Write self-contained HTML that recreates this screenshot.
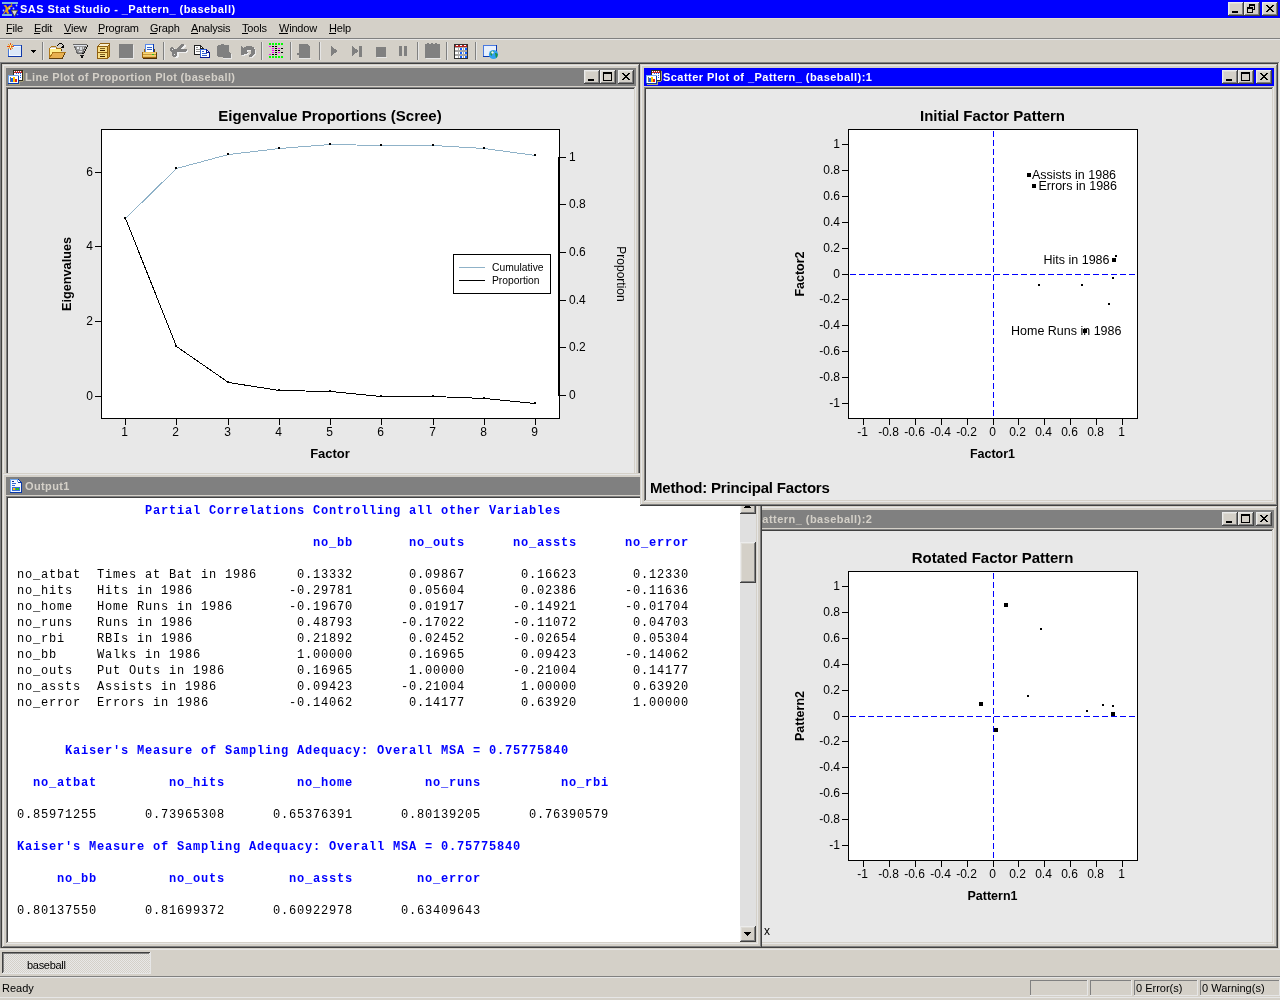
<!DOCTYPE html><html><head><meta charset="utf-8"><style>html,body{margin:0;padding:0;}body{width:1280px;height:1000px;position:relative;overflow:hidden;background:#D4D0C8;font-family:"Liberation Sans",sans-serif;}</style></head><body><div style="position:absolute;left:0;top:0;width:1280px;height:1000px;overflow:hidden;will-change:transform"><div style="position:absolute;left:0px;top:0px;width:1280px;height:18px;background:#0000FF;"></div>
<svg style="position:absolute;left:0px;top:0px" width="20" height="18">
<rect x="2" y="2" width="16" height="2" fill="#78B8E0"/><rect x="2" y="14" width="10" height="2" fill="#78B8E0"/>
<path d="M3.5 5.5 L6 5 L7.5 7.5 L9.5 5.5 L12.5 5.8 L9 8.5 L8 11 L9.5 13.5 L7 13.8 L6 11.5 L4 14 L3 13.8 L5.5 10 L5.5 7.5 Z" fill="#E8A810"/>
<path d="M10.3 3.5 L12 3.2 L12.2 5 L11 5.8 L12.8 6 L12.5 6.5 L10 6.5 L11.5 4.5 Z" fill="#E8A810"/>
<path d="M11.3 10.3 L17.7 10.3 L14.5 16.5 Z" fill="#D8D8D0" stroke="#505020" stroke-width="0.8"/>
<circle cx="16.5" cy="5.5" r="0.9" fill="#B0E0F0"/><circle cx="9.5" cy="8.5" r="0.9" fill="#B0E0F0"/><circle cx="13.5" cy="8.5" r="0.9" fill="#B0E0F0"/><circle cx="3.5" cy="10.5" r="0.9" fill="#B0E0F0"/><circle cx="17.5" cy="14.5" r="0.8" fill="#60B0E0"/>
</svg>
<svg style="position:absolute;left:0;top:0;overflow:visible" width="1" height="1"><text x="20" y="13" font-family="'Liberation Sans', sans-serif" font-size="11" font-weight="bold" fill="#FFFFFF" text-anchor="start" style="white-space:pre;letter-spacing:0.46px">SAS Stat Studio - _Pattern_ (baseball)</text></svg>
<div style="position:absolute;left:1228px;top:2px;width:16px;height:14px;background:#404040;"></div>
<div style="position:absolute;left:1228px;top:2px;width:15px;height:13px;background:#ECECEC;"></div>
<div style="position:absolute;left:1229px;top:3px;width:14px;height:12px;background:#808080;"></div>
<div style="position:absolute;left:1229px;top:3px;width:13px;height:11px;background:#DEDCD6;"></div>
<div style="position:absolute;left:1230px;top:4px;width:12px;height:10px;background:#D4D0C8;"></div>
<div style="position:absolute;left:1232px;top:11px;width:6px;height:1px;background:#000"></div><div style="position:absolute;left:1232px;top:12px;width:6px;height:1px;background:#000"></div>
<div style="position:absolute;left:1244px;top:2px;width:16px;height:14px;background:#404040;"></div>
<div style="position:absolute;left:1244px;top:2px;width:15px;height:13px;background:#ECECEC;"></div>
<div style="position:absolute;left:1245px;top:3px;width:14px;height:12px;background:#808080;"></div>
<div style="position:absolute;left:1245px;top:3px;width:13px;height:11px;background:#DEDCD6;"></div>
<div style="position:absolute;left:1246px;top:4px;width:12px;height:10px;background:#D4D0C8;"></div>
<div style="position:absolute;left:1249px;top:4px;width:6px;height:1px;background:#000"></div><div style="position:absolute;left:1249px;top:5px;width:6px;height:1px;background:#000"></div><div style="position:absolute;left:1249px;top:6px;width:1px;height:1px;background:#000"></div><div style="position:absolute;left:1254px;top:6px;width:1px;height:1px;background:#000"></div><div style="position:absolute;left:1247px;top:7px;width:6px;height:1px;background:#000"></div><div style="position:absolute;left:1254px;top:7px;width:1px;height:1px;background:#000"></div><div style="position:absolute;left:1247px;top:8px;width:6px;height:1px;background:#000"></div><div style="position:absolute;left:1254px;top:8px;width:1px;height:1px;background:#000"></div><div style="position:absolute;left:1247px;top:9px;width:1px;height:1px;background:#000"></div><div style="position:absolute;left:1252px;top:9px;width:3px;height:1px;background:#000"></div><div style="position:absolute;left:1247px;top:10px;width:1px;height:1px;background:#000"></div><div style="position:absolute;left:1252px;top:10px;width:1px;height:1px;background:#000"></div><div style="position:absolute;left:1247px;top:11px;width:1px;height:1px;background:#000"></div><div style="position:absolute;left:1252px;top:11px;width:1px;height:1px;background:#000"></div><div style="position:absolute;left:1247px;top:12px;width:6px;height:1px;background:#000"></div>
<div style="position:absolute;left:1262px;top:2px;width:16px;height:14px;background:#404040;"></div>
<div style="position:absolute;left:1262px;top:2px;width:15px;height:13px;background:#ECECEC;"></div>
<div style="position:absolute;left:1263px;top:3px;width:14px;height:12px;background:#808080;"></div>
<div style="position:absolute;left:1263px;top:3px;width:13px;height:11px;background:#DEDCD6;"></div>
<div style="position:absolute;left:1264px;top:4px;width:12px;height:10px;background:#D4D0C8;"></div>
<div style="position:absolute;left:1266px;top:5px;width:2px;height:1px;background:#000"></div><div style="position:absolute;left:1272px;top:5px;width:2px;height:1px;background:#000"></div><div style="position:absolute;left:1267px;top:6px;width:2px;height:1px;background:#000"></div><div style="position:absolute;left:1271px;top:6px;width:2px;height:1px;background:#000"></div><div style="position:absolute;left:1268px;top:7px;width:4px;height:1px;background:#000"></div><div style="position:absolute;left:1269px;top:8px;width:2px;height:1px;background:#000"></div><div style="position:absolute;left:1268px;top:9px;width:4px;height:1px;background:#000"></div><div style="position:absolute;left:1267px;top:10px;width:2px;height:1px;background:#000"></div><div style="position:absolute;left:1271px;top:10px;width:2px;height:1px;background:#000"></div><div style="position:absolute;left:1266px;top:11px;width:2px;height:1px;background:#000"></div><div style="position:absolute;left:1272px;top:11px;width:2px;height:1px;background:#000"></div>
<div style="position:absolute;left:0px;top:18px;width:1280px;height:20px;background:#D4D0C8;"></div>
<div style="position:absolute;left:0px;top:18px;width:1280px;height:1px;background:#E4E0CC;"></div>
<div style="position:absolute;left:0px;top:38px;width:1280px;height:1px;background:#808080;"></div>
<div style="position:absolute;left:0px;top:39px;width:1280px;height:1px;background:#E6E6E6;"></div>
<svg style="position:absolute;left:0;top:0;overflow:visible" width="1" height="1"><text x="6" y="32" font-family="'Liberation Sans', sans-serif" font-size="11" font-weight="normal" fill="#000" text-anchor="start" style="white-space:pre;letter-spacing:-0.2px">File</text></svg>
<div style="position:absolute;left:6px;top:33px;width:6px;height:1px;background:#000;"></div>
<svg style="position:absolute;left:0;top:0;overflow:visible" width="1" height="1"><text x="34" y="32" font-family="'Liberation Sans', sans-serif" font-size="11" font-weight="normal" fill="#000" text-anchor="start" style="white-space:pre;letter-spacing:-0.2px">Edit</text></svg>
<div style="position:absolute;left:34px;top:33px;width:6px;height:1px;background:#000;"></div>
<svg style="position:absolute;left:0;top:0;overflow:visible" width="1" height="1"><text x="64" y="32" font-family="'Liberation Sans', sans-serif" font-size="11" font-weight="normal" fill="#000" text-anchor="start" style="white-space:pre;letter-spacing:-0.2px">View</text></svg>
<div style="position:absolute;left:64px;top:33px;width:7px;height:1px;background:#000;"></div>
<svg style="position:absolute;left:0;top:0;overflow:visible" width="1" height="1"><text x="98" y="32" font-family="'Liberation Sans', sans-serif" font-size="11" font-weight="normal" fill="#000" text-anchor="start" style="white-space:pre;letter-spacing:-0.2px">Program</text></svg>
<div style="position:absolute;left:98px;top:33px;width:6px;height:1px;background:#000;"></div>
<svg style="position:absolute;left:0;top:0;overflow:visible" width="1" height="1"><text x="150" y="32" font-family="'Liberation Sans', sans-serif" font-size="11" font-weight="normal" fill="#000" text-anchor="start" style="white-space:pre;letter-spacing:-0.2px">Graph</text></svg>
<div style="position:absolute;left:150px;top:33px;width:7px;height:1px;background:#000;"></div>
<svg style="position:absolute;left:0;top:0;overflow:visible" width="1" height="1"><text x="191" y="32" font-family="'Liberation Sans', sans-serif" font-size="11" font-weight="normal" fill="#000" text-anchor="start" style="white-space:pre;letter-spacing:-0.2px">Analysis</text></svg>
<div style="position:absolute;left:191px;top:33px;width:7px;height:1px;background:#000;"></div>
<svg style="position:absolute;left:0;top:0;overflow:visible" width="1" height="1"><text x="242" y="32" font-family="'Liberation Sans', sans-serif" font-size="11" font-weight="normal" fill="#000" text-anchor="start" style="white-space:pre;letter-spacing:-0.2px">Tools</text></svg>
<div style="position:absolute;left:242px;top:33px;width:6px;height:1px;background:#000;"></div>
<svg style="position:absolute;left:0;top:0;overflow:visible" width="1" height="1"><text x="279" y="32" font-family="'Liberation Sans', sans-serif" font-size="11" font-weight="normal" fill="#000" text-anchor="start" style="white-space:pre;letter-spacing:-0.2px">Window</text></svg>
<div style="position:absolute;left:279px;top:33px;width:9px;height:1px;background:#000;"></div>
<svg style="position:absolute;left:0;top:0;overflow:visible" width="1" height="1"><text x="329" y="32" font-family="'Liberation Sans', sans-serif" font-size="11" font-weight="normal" fill="#000" text-anchor="start" style="white-space:pre;letter-spacing:-0.2px">Help</text></svg>
<div style="position:absolute;left:329px;top:33px;width:7px;height:1px;background:#000;"></div>
<div style="position:absolute;left:0px;top:40px;width:1280px;height:22px;background:#D4D0C8;"></div>
<div style="position:absolute;left:10px;top:43px;width:1px;height:1px;background:#E85010"></div><div style="position:absolute;left:8px;top:44px;width:1px;height:1px;background:#F0A020"></div><div style="position:absolute;left:10px;top:44px;width:1px;height:1px;background:#E85010"></div><div style="position:absolute;left:12px;top:44px;width:1px;height:1px;background:#F0A020"></div><div style="position:absolute;left:9px;top:45px;width:1px;height:1px;background:#F0A020"></div><div style="position:absolute;left:10px;top:45px;width:1px;height:1px;background:#FFF0A0"></div><div style="position:absolute;left:11px;top:45px;width:1px;height:1px;background:#F0A020"></div><div style="position:absolute;left:13px;top:45px;width:8px;height:1px;background:#4878D8"></div><div style="position:absolute;left:21px;top:45px;width:1px;height:1px;background:#1038A8"></div><div style="position:absolute;left:7px;top:46px;width:3px;height:1px;background:#E85010"></div><div style="position:absolute;left:10px;top:46px;width:1px;height:1px;background:#FFF0A0"></div><div style="position:absolute;left:11px;top:46px;width:3px;height:1px;background:#E85010"></div><div style="position:absolute;left:14px;top:46px;width:7px;height:1px;background:#F4F8FF"></div><div style="position:absolute;left:21px;top:46px;width:1px;height:1px;background:#1038A8"></div><div style="position:absolute;left:9px;top:47px;width:1px;height:1px;background:#F0A020"></div><div style="position:absolute;left:10px;top:47px;width:1px;height:1px;background:#FFF0A0"></div><div style="position:absolute;left:11px;top:47px;width:1px;height:1px;background:#F0A020"></div><div style="position:absolute;left:13px;top:47px;width:1px;height:1px;background:#F4F8FF"></div><div style="position:absolute;left:14px;top:47px;width:7px;height:1px;background:#DCE8F8"></div><div style="position:absolute;left:21px;top:47px;width:1px;height:1px;background:#1038A8"></div><div style="position:absolute;left:8px;top:48px;width:1px;height:1px;background:#F0A020"></div><div style="position:absolute;left:10px;top:48px;width:1px;height:1px;background:#E85010"></div><div style="position:absolute;left:12px;top:48px;width:1px;height:1px;background:#F0A020"></div><div style="position:absolute;left:13px;top:48px;width:8px;height:1px;background:#DCE8F8"></div><div style="position:absolute;left:21px;top:48px;width:1px;height:1px;background:#1038A8"></div><div style="position:absolute;left:8px;top:49px;width:1px;height:1px;background:#4878D8"></div><div style="position:absolute;left:9px;top:49px;width:1px;height:1px;background:#F4F8FF"></div><div style="position:absolute;left:10px;top:49px;width:1px;height:1px;background:#E85010"></div><div style="position:absolute;left:12px;top:49px;width:9px;height:1px;background:#DCE8F8"></div><div style="position:absolute;left:21px;top:49px;width:1px;height:1px;background:#1038A8"></div><div style="position:absolute;left:8px;top:50px;width:1px;height:1px;background:#4878D8"></div><div style="position:absolute;left:9px;top:50px;width:1px;height:1px;background:#F4F8FF"></div><div style="position:absolute;left:10px;top:50px;width:11px;height:1px;background:#DCE8F8"></div><div style="position:absolute;left:21px;top:50px;width:1px;height:1px;background:#1038A8"></div><div style="position:absolute;left:8px;top:51px;width:1px;height:1px;background:#4878D8"></div><div style="position:absolute;left:9px;top:51px;width:1px;height:1px;background:#F4F8FF"></div><div style="position:absolute;left:10px;top:51px;width:11px;height:1px;background:#DCE8F8"></div><div style="position:absolute;left:21px;top:51px;width:1px;height:1px;background:#1038A8"></div><div style="position:absolute;left:8px;top:52px;width:1px;height:1px;background:#4878D8"></div><div style="position:absolute;left:9px;top:52px;width:1px;height:1px;background:#F4F8FF"></div><div style="position:absolute;left:10px;top:52px;width:11px;height:1px;background:#DCE8F8"></div><div style="position:absolute;left:21px;top:52px;width:1px;height:1px;background:#1038A8"></div><div style="position:absolute;left:8px;top:53px;width:1px;height:1px;background:#4878D8"></div><div style="position:absolute;left:9px;top:53px;width:1px;height:1px;background:#F4F8FF"></div><div style="position:absolute;left:10px;top:53px;width:11px;height:1px;background:#DCE8F8"></div><div style="position:absolute;left:21px;top:53px;width:1px;height:1px;background:#1038A8"></div><div style="position:absolute;left:8px;top:54px;width:1px;height:1px;background:#4878D8"></div><div style="position:absolute;left:9px;top:54px;width:1px;height:1px;background:#F4F8FF"></div><div style="position:absolute;left:10px;top:54px;width:11px;height:1px;background:#DCE8F8"></div><div style="position:absolute;left:21px;top:54px;width:1px;height:1px;background:#1038A8"></div><div style="position:absolute;left:8px;top:55px;width:1px;height:1px;background:#4878D8"></div><div style="position:absolute;left:9px;top:55px;width:12px;height:1px;background:#F4F8FF"></div><div style="position:absolute;left:21px;top:55px;width:1px;height:1px;background:#1038A8"></div><div style="position:absolute;left:8px;top:56px;width:14px;height:1px;background:#1038A8"></div>
<svg style="position:absolute;left:31px;top:50px" width="5" height="3" shape-rendering="crispEdges"><rect x="0" y="0" width="5" height="1" fill="#000"/><rect x="1" y="1" width="3" height="1" fill="#000"/><rect x="2" y="2" width="1" height="1" fill="#000"/></svg>
<div style="position:absolute;left:42px;top:42px;width:1px;height:18px;background:#808080;"></div>
<div style="position:absolute;left:43px;top:42px;width:1px;height:18px;background:#E6E6E6;"></div>
<svg style="position:absolute;left:48px;top:43px" width="18" height="17" shape-rendering="crispEdges"><rect x="9" y="2" width="1" height="1" fill="#000"/><rect x="10" y="1" width="1" height="1" fill="#000"/><rect x="11" y="0" width="3" height="1" fill="#000"/><rect x="14" y="1" width="1" height="1" fill="#000"/><rect x="15" y="2" width="1" height="3" fill="#000"/><rect x="13" y="4" width="3" height="1" fill="#000"/><rect x="14" y="3" width="1" height="1" fill="#000"/><rect x="3" y="3" width="5" height="1" fill="#B07818"/><rect x="2" y="4" width="1" height="1" fill="#B07818"/><rect x="8" y="4" width="1" height="2" fill="#B07818"/><rect x="9" y="5" width="4" height="1" fill="#B07818"/><rect x="1" y="5" width="1" height="11" fill="#B07818"/><rect x="2" y="5" width="6" height="1" fill="#FFFFFF"/><rect x="2" y="6" width="11" height="9" fill="#FFF090"/><rect x="13" y="6" width="1" height="2" fill="#604010"/><path d="M5 9 L18 9 L14 16 L1 16 Z" fill="#E8B050"/><rect x="5" y="9" width="13" height="1" fill="#B07818"/><path d="M5 9 L1 16" stroke="#B07818" stroke-width="1"/><rect x="1" y="15" width="14" height="1" fill="#604010"/><rect x="16" y="10" width="1" height="2" fill="#604010"/><rect x="15" y="12" width="1" height="2" fill="#604010"/><rect x="14" y="14" width="1" height="1" fill="#604010"/></svg>
<svg style="position:absolute;left:73px;top:44px" width="16" height="15" shape-rendering="crispEdges"><path d="M0 0 L14 0 L10 10 L4 10 Z" fill="#686868"/><rect x="1" y="1" width="12" height="1" fill="#E0E4EC"/><path d="M2 2 L12 2 L9 9 L5 9 Z" fill="#989898"/><rect x="4" y="3" width="2" height="2" fill="#E8ECF0"/><rect x="7" y="3" width="2" height="3" fill="#D8DCE0"/><rect x="10" y="3" width="1" height="2" fill="#D0D0D0"/><rect x="6" y="7" width="3" height="1" fill="#E0E0E0"/><rect x="14" y="1" width="1" height="2" fill="#101010"/><rect x="13" y="3" width="1" height="2" fill="#101010"/><rect x="12" y="5" width="1" height="2" fill="#101010"/><rect x="11" y="7" width="1" height="2" fill="#101010"/><rect x="9" y="9" width="2" height="1" fill="#101010"/><rect x="7" y="11" width="4" height="1" fill="#202020"/><rect x="8" y="12" width="2" height="2" fill="#101010"/></svg>
<svg style="position:absolute;left:96px;top:43px" width="15" height="17" shape-rendering="crispEdges"><path d="M1 3 L4 0 L14 0 L14 13 L11 16 L1 16 Z" fill="#906010"/><rect x="2" y="4" width="9" height="5" fill="#f8e088"/><rect x="2" y="10" width="9" height="5" fill="#f8e088"/><path d="M2 3 L4 1 L13 1 L11 3 Z" fill="#f8f0d0"/><path d="M12 3 L13 2 L13 13 L12 14 Z" fill="#d0a040"/><rect x="4" y="5" width="5" height="1" fill="#806020"/><rect x="4" y="7" width="5" height="1" fill="#402000"/><rect x="4" y="11" width="5" height="1" fill="#806020"/><rect x="4" y="13" width="5" height="1" fill="#402000"/></svg>
<svg style="position:absolute;left:119px;top:44px" width="15" height="15" shape-rendering="crispEdges"><rect x="1" y="1" width="14" height="14" fill="#E6E6E6"/><rect x="0" y="0" width="14" height="14" fill="#808080"/></svg>
<svg style="position:absolute;left:141px;top:43px" width="17" height="17" shape-rendering="crispEdges"><rect x="3" y="6" width="2" height="4" fill="#A06810"/><rect x="12" y="6" width="2" height="4" fill="#604008"/><rect x="4" y="1" width="9" height="9" fill="#0838B0"/><rect x="4" y="1" width="8" height="9" fill="#5888E8"/><rect x="5" y="2" width="7" height="8" fill="#F8FCFF"/><rect x="6" y="4" width="5" height="1" fill="#3060C8"/><rect x="6" y="6" width="5" height="1" fill="#3060C8"/><rect x="1" y="9" width="15" height="6" fill="#A06810"/><rect x="2" y="9" width="13" height="5" fill="#E8C060"/><rect x="2" y="10" width="13" height="1" fill="#F8D878"/><rect x="2" y="12" width="13" height="1" fill="#F8D070"/><rect x="2" y="11" width="13" height="1" fill="#C89838"/><rect x="2" y="15" width="14" height="1" fill="#503008"/><rect x="15" y="10" width="1" height="5" fill="#604008"/><rect x="11" y="11" width="2" height="1" fill="#20C020"/></svg>
<div style="position:absolute;left:163px;top:42px;width:1px;height:18px;background:#808080;"></div>
<div style="position:absolute;left:164px;top:42px;width:1px;height:18px;background:#E6E6E6;"></div>

<div style="position:absolute;left:183px;top:45px;width:3px;height:1px;background:#F0F0F0"></div><div style="position:absolute;left:182px;top:46px;width:4px;height:1px;background:#F0F0F0"></div><div style="position:absolute;left:181px;top:47px;width:4px;height:1px;background:#F0F0F0"></div><div style="position:absolute;left:173px;top:48px;width:2px;height:1px;background:#F0F0F0"></div><div style="position:absolute;left:180px;top:48px;width:4px;height:1px;background:#F0F0F0"></div><div style="position:absolute;left:172px;top:49px;width:4px;height:1px;background:#F0F0F0"></div><div style="position:absolute;left:179px;top:49px;width:4px;height:1px;background:#F0F0F0"></div><div style="position:absolute;left:172px;top:50px;width:2px;height:1px;background:#F0F0F0"></div><div style="position:absolute;left:175px;top:50px;width:13px;height:1px;background:#F0F0F0"></div><div style="position:absolute;left:172px;top:51px;width:16px;height:1px;background:#F0F0F0"></div><div style="position:absolute;left:173px;top:52px;width:14px;height:1px;background:#F0F0F0"></div><div style="position:absolute;left:174px;top:53px;width:5px;height:1px;background:#F0F0F0"></div><div style="position:absolute;left:174px;top:54px;width:5px;height:1px;background:#F0F0F0"></div><div style="position:absolute;left:174px;top:55px;width:2px;height:1px;background:#F0F0F0"></div><div style="position:absolute;left:177px;top:55px;width:2px;height:1px;background:#F0F0F0"></div><div style="position:absolute;left:174px;top:56px;width:5px;height:1px;background:#F0F0F0"></div><div style="position:absolute;left:175px;top:57px;width:3px;height:1px;background:#F0F0F0"></div>
<div style="position:absolute;left:181px;top:44px;width:3px;height:1px;background:#808080"></div><div style="position:absolute;left:180px;top:45px;width:4px;height:1px;background:#808080"></div><div style="position:absolute;left:179px;top:46px;width:4px;height:1px;background:#808080"></div><div style="position:absolute;left:171px;top:47px;width:2px;height:1px;background:#808080"></div><div style="position:absolute;left:178px;top:47px;width:4px;height:1px;background:#808080"></div><div style="position:absolute;left:170px;top:48px;width:4px;height:1px;background:#808080"></div><div style="position:absolute;left:177px;top:48px;width:4px;height:1px;background:#808080"></div><div style="position:absolute;left:170px;top:49px;width:2px;height:1px;background:#808080"></div><div style="position:absolute;left:173px;top:49px;width:14px;height:1px;background:#808080"></div><div style="position:absolute;left:170px;top:50px;width:17px;height:1px;background:#808080"></div><div style="position:absolute;left:171px;top:51px;width:15px;height:1px;background:#808080"></div><div style="position:absolute;left:172px;top:52px;width:5px;height:1px;background:#808080"></div><div style="position:absolute;left:172px;top:53px;width:5px;height:1px;background:#808080"></div><div style="position:absolute;left:172px;top:54px;width:2px;height:1px;background:#808080"></div><div style="position:absolute;left:175px;top:54px;width:2px;height:1px;background:#808080"></div><div style="position:absolute;left:172px;top:55px;width:5px;height:1px;background:#808080"></div><div style="position:absolute;left:173px;top:56px;width:3px;height:1px;background:#808080"></div>
<div style="position:absolute;left:194px;top:45px;width:7px;height:1px;background:#202020"></div><div style="position:absolute;left:194px;top:46px;width:1px;height:1px;background:#202020"></div><div style="position:absolute;left:195px;top:46px;width:5px;height:1px;background:#FFFFFF"></div><div style="position:absolute;left:200px;top:46px;width:2px;height:1px;background:#202020"></div><div style="position:absolute;left:194px;top:47px;width:1px;height:1px;background:#202020"></div><div style="position:absolute;left:195px;top:47px;width:1px;height:1px;background:#FFFFFF"></div><div style="position:absolute;left:196px;top:47px;width:2px;height:1px;background:#909090"></div><div style="position:absolute;left:198px;top:47px;width:2px;height:1px;background:#FFFFFF"></div><div style="position:absolute;left:200px;top:47px;width:1px;height:1px;background:#202020"></div><div style="position:absolute;left:201px;top:47px;width:1px;height:1px;background:#FFFFFF"></div><div style="position:absolute;left:202px;top:47px;width:1px;height:1px;background:#202020"></div><div style="position:absolute;left:194px;top:48px;width:1px;height:1px;background:#202020"></div><div style="position:absolute;left:195px;top:48px;width:5px;height:1px;background:#FFFFFF"></div><div style="position:absolute;left:200px;top:48px;width:4px;height:1px;background:#202020"></div><div style="position:absolute;left:194px;top:49px;width:1px;height:1px;background:#202020"></div><div style="position:absolute;left:195px;top:49px;width:1px;height:1px;background:#FFFFFF"></div><div style="position:absolute;left:196px;top:49px;width:4px;height:1px;background:#909090"></div><div style="position:absolute;left:200px;top:49px;width:6px;height:1px;background:#3868D8"></div><div style="position:absolute;left:206px;top:49px;width:1px;height:1px;background:#081890"></div><div style="position:absolute;left:194px;top:50px;width:1px;height:1px;background:#202020"></div><div style="position:absolute;left:195px;top:50px;width:5px;height:1px;background:#FFFFFF"></div><div style="position:absolute;left:200px;top:50px;width:1px;height:1px;background:#3868D8"></div><div style="position:absolute;left:201px;top:50px;width:5px;height:1px;background:#FFFFFF"></div><div style="position:absolute;left:206px;top:50px;width:2px;height:1px;background:#081890"></div><div style="position:absolute;left:194px;top:51px;width:1px;height:1px;background:#202020"></div><div style="position:absolute;left:195px;top:51px;width:1px;height:1px;background:#FFFFFF"></div><div style="position:absolute;left:196px;top:51px;width:4px;height:1px;background:#909090"></div><div style="position:absolute;left:200px;top:51px;width:1px;height:1px;background:#3868D8"></div><div style="position:absolute;left:201px;top:51px;width:1px;height:1px;background:#FFFFFF"></div><div style="position:absolute;left:202px;top:51px;width:2px;height:1px;background:#3060D0"></div><div style="position:absolute;left:204px;top:51px;width:2px;height:1px;background:#FFFFFF"></div><div style="position:absolute;left:206px;top:51px;width:1px;height:1px;background:#081890"></div><div style="position:absolute;left:207px;top:51px;width:1px;height:1px;background:#FFFFFF"></div><div style="position:absolute;left:208px;top:51px;width:1px;height:1px;background:#081890"></div><div style="position:absolute;left:194px;top:52px;width:1px;height:1px;background:#202020"></div><div style="position:absolute;left:195px;top:52px;width:5px;height:1px;background:#FFFFFF"></div><div style="position:absolute;left:200px;top:52px;width:1px;height:1px;background:#3868D8"></div><div style="position:absolute;left:201px;top:52px;width:5px;height:1px;background:#FFFFFF"></div><div style="position:absolute;left:206px;top:52px;width:4px;height:1px;background:#081890"></div><div style="position:absolute;left:194px;top:53px;width:1px;height:1px;background:#202020"></div><div style="position:absolute;left:195px;top:53px;width:5px;height:1px;background:#FFFFFF"></div><div style="position:absolute;left:200px;top:53px;width:1px;height:1px;background:#3868D8"></div><div style="position:absolute;left:201px;top:53px;width:1px;height:1px;background:#FFFFFF"></div><div style="position:absolute;left:202px;top:53px;width:5px;height:1px;background:#3060D0"></div><div style="position:absolute;left:207px;top:53px;width:2px;height:1px;background:#FFFFFF"></div><div style="position:absolute;left:209px;top:53px;width:1px;height:1px;background:#081890"></div><div style="position:absolute;left:194px;top:54px;width:6px;height:1px;background:#202020"></div><div style="position:absolute;left:200px;top:54px;width:1px;height:1px;background:#3868D8"></div><div style="position:absolute;left:201px;top:54px;width:8px;height:1px;background:#FFFFFF"></div><div style="position:absolute;left:209px;top:54px;width:1px;height:1px;background:#081890"></div><div style="position:absolute;left:200px;top:55px;width:1px;height:1px;background:#3868D8"></div><div style="position:absolute;left:201px;top:55px;width:1px;height:1px;background:#FFFFFF"></div><div style="position:absolute;left:202px;top:55px;width:5px;height:1px;background:#3060D0"></div><div style="position:absolute;left:207px;top:55px;width:2px;height:1px;background:#FFFFFF"></div><div style="position:absolute;left:209px;top:55px;width:1px;height:1px;background:#081890"></div><div style="position:absolute;left:200px;top:56px;width:1px;height:1px;background:#3868D8"></div><div style="position:absolute;left:201px;top:56px;width:8px;height:1px;background:#FFFFFF"></div><div style="position:absolute;left:209px;top:56px;width:1px;height:1px;background:#081890"></div><div style="position:absolute;left:200px;top:57px;width:10px;height:1px;background:#081890"></div>
<svg style="position:absolute;left:216px;top:44px" width="17" height="16" shape-rendering="crispEdges"><path d="M1 2 L2 1 L5 1 L5 0 L8 0 L8 1 L12 1 L13 2 L13 8 L15 10 L15 14 L7 14 L7 13 L2 13 L1 12 Z" fill="#808080"/><rect x="7" y="14" width="9" height="1" fill="#E8E8E8"/><rect x="15" y="10" width="1" height="4" fill="#E8E8E8"/></svg>
<div style="position:absolute;left:242px;top:47px;width:1px;height:1px;background:#ECECEC"></div><div style="position:absolute;left:247px;top:47px;width:6px;height:1px;background:#ECECEC"></div><div style="position:absolute;left:242px;top:48px;width:2px;height:1px;background:#ECECEC"></div><div style="position:absolute;left:245px;top:48px;width:10px;height:1px;background:#ECECEC"></div><div style="position:absolute;left:242px;top:49px;width:13px;height:1px;background:#ECECEC"></div><div style="position:absolute;left:242px;top:50px;width:14px;height:1px;background:#ECECEC"></div><div style="position:absolute;left:242px;top:51px;width:6px;height:1px;background:#ECECEC"></div><div style="position:absolute;left:252px;top:51px;width:4px;height:1px;background:#ECECEC"></div><div style="position:absolute;left:242px;top:52px;width:6px;height:1px;background:#ECECEC"></div><div style="position:absolute;left:252px;top:52px;width:4px;height:1px;background:#ECECEC"></div><div style="position:absolute;left:242px;top:53px;width:7px;height:1px;background:#ECECEC"></div><div style="position:absolute;left:252px;top:53px;width:4px;height:1px;background:#ECECEC"></div><div style="position:absolute;left:242px;top:54px;width:6px;height:1px;background:#ECECEC"></div><div style="position:absolute;left:252px;top:54px;width:4px;height:1px;background:#ECECEC"></div><div style="position:absolute;left:242px;top:55px;width:3px;height:1px;background:#ECECEC"></div><div style="position:absolute;left:251px;top:55px;width:4px;height:1px;background:#ECECEC"></div><div style="position:absolute;left:250px;top:56px;width:4px;height:1px;background:#ECECEC"></div><div style="position:absolute;left:250px;top:57px;width:3px;height:1px;background:#ECECEC"></div>
<div style="position:absolute;left:241px;top:46px;width:1px;height:1px;background:#808080"></div><div style="position:absolute;left:246px;top:46px;width:6px;height:1px;background:#808080"></div><div style="position:absolute;left:241px;top:47px;width:2px;height:1px;background:#808080"></div><div style="position:absolute;left:244px;top:47px;width:10px;height:1px;background:#808080"></div><div style="position:absolute;left:241px;top:48px;width:13px;height:1px;background:#808080"></div><div style="position:absolute;left:241px;top:49px;width:14px;height:1px;background:#808080"></div><div style="position:absolute;left:241px;top:50px;width:6px;height:1px;background:#808080"></div><div style="position:absolute;left:251px;top:50px;width:4px;height:1px;background:#808080"></div><div style="position:absolute;left:241px;top:51px;width:6px;height:1px;background:#808080"></div><div style="position:absolute;left:251px;top:51px;width:4px;height:1px;background:#808080"></div><div style="position:absolute;left:241px;top:52px;width:7px;height:1px;background:#808080"></div><div style="position:absolute;left:251px;top:52px;width:4px;height:1px;background:#808080"></div><div style="position:absolute;left:241px;top:53px;width:6px;height:1px;background:#808080"></div><div style="position:absolute;left:251px;top:53px;width:4px;height:1px;background:#808080"></div><div style="position:absolute;left:241px;top:54px;width:3px;height:1px;background:#808080"></div><div style="position:absolute;left:250px;top:54px;width:4px;height:1px;background:#808080"></div><div style="position:absolute;left:249px;top:55px;width:4px;height:1px;background:#808080"></div><div style="position:absolute;left:249px;top:56px;width:3px;height:1px;background:#808080"></div>
<div style="position:absolute;left:261px;top:42px;width:1px;height:18px;background:#808080;"></div>
<div style="position:absolute;left:262px;top:42px;width:1px;height:18px;background:#E6E6E6;"></div>
<svg style="position:absolute;left:269px;top:43px" width="15" height="15" shape-rendering="crispEdges"><rect x="0" y="0" width="2" height="2" fill="#00ff00"/><rect x="0" y="13" width="2" height="2" fill="#00ff00"/><rect x="3" y="0" width="2" height="2" fill="#00ff00"/><rect x="3" y="13" width="2" height="2" fill="#00ff00"/><rect x="6" y="0" width="2" height="2" fill="#00ff00"/><rect x="6" y="13" width="2" height="2" fill="#00ff00"/><rect x="9" y="0" width="2" height="2" fill="#00ff00"/><rect x="9" y="13" width="2" height="2" fill="#00ff00"/><rect x="12" y="0" width="2" height="2" fill="#00ff00"/><rect x="12" y="13" width="2" height="2" fill="#00ff00"/><rect x="0" y="3" width="2" height="1" fill="#ff00ff"/><rect x="3" y="3" width="2" height="1" fill="#000"/><rect x="6" y="3" width="2" height="1" fill="#000"/><rect x="3" y="5" width="2" height="1" fill="#ff00ff"/><rect x="6" y="5" width="2" height="1" fill="#000"/><rect x="9" y="5" width="2" height="1" fill="#ff00ff"/><rect x="12" y="5" width="2" height="1" fill="#000"/><rect x="3" y="7" width="2" height="1" fill="#ff00ff"/><rect x="6" y="7" width="2" height="1" fill="#000"/><rect x="9" y="7" width="2" height="1" fill="#000"/><rect x="3" y="9" width="2" height="1" fill="#ff00ff"/><rect x="6" y="9" width="2" height="1" fill="#000"/><rect x="9" y="9" width="2" height="1" fill="#ff00ff"/><rect x="12" y="9" width="2" height="1" fill="#000"/><rect x="0" y="11" width="2" height="1" fill="#ff00ff"/><rect x="3" y="11" width="2" height="1" fill="#000"/><rect x="6" y="11" width="2" height="1" fill="#000"/></svg>
<div style="position:absolute;left:290px;top:42px;width:1px;height:18px;background:#808080;"></div>
<div style="position:absolute;left:291px;top:42px;width:1px;height:18px;background:#E6E6E6;"></div>
<svg style="position:absolute;left:296px;top:44px" width="16" height="15" shape-rendering="crispEdges"><path d="M3 0 L11 0 L14 3 L14 14 L3 14 L3 11 L1 11 L1 9 L3 9 Z" fill="#808080"/><rect x="3" y="14" width="12" height="1" fill="#E6E6E6"/></svg>
<div style="position:absolute;left:319px;top:42px;width:1px;height:18px;background:#808080;"></div>
<div style="position:absolute;left:320px;top:42px;width:1px;height:18px;background:#E6E6E6;"></div>
<svg style="position:absolute;left:330px;top:46px" width="10" height="11" shape-rendering="crispEdges"><path d="M1 0 L8 5 L1 10 Z" fill="#808080"/></svg>
<svg style="position:absolute;left:351px;top:46px" width="12" height="11" shape-rendering="crispEdges"><path d="M1 0 L8 5 L1 10 Z" fill="#808080"/><rect x="8" y="0" width="3" height="11" fill="#808080"/></svg>
<svg style="position:absolute;left:376px;top:47px" width="11" height="11" shape-rendering="crispEdges"><rect x="0" y="0" width="10" height="10" fill="#808080"/><rect x="1" y="10" width="10" height="1" fill="#E6E6E6"/></svg>
<svg style="position:absolute;left:399px;top:46px" width="10" height="11" shape-rendering="crispEdges"><rect x="0" y="0" width="3" height="10" fill="#808080"/><rect x="5" y="0" width="3" height="10" fill="#808080"/></svg>
<div style="position:absolute;left:417px;top:42px;width:1px;height:18px;background:#808080;"></div>
<div style="position:absolute;left:418px;top:42px;width:1px;height:18px;background:#E6E6E6;"></div>
<svg style="position:absolute;left:424px;top:43px" width="17" height="16" shape-rendering="crispEdges"><rect x="1" y="1" width="15" height="14" fill="#808080"/><rect x="3" y="0" width="2" height="1" fill="#808080"/><rect x="7" y="0" width="2" height="1" fill="#808080"/><rect x="11" y="0" width="2" height="1" fill="#808080"/><rect x="2" y="15" width="15" height="1" fill="#E6E6E6"/></svg>
<div style="position:absolute;left:446px;top:42px;width:1px;height:18px;background:#808080;"></div>
<div style="position:absolute;left:447px;top:42px;width:1px;height:18px;background:#E6E6E6;"></div>
<div style="position:absolute;left:454px;top:44px;width:14px;height:1px;background:#303030"></div><div style="position:absolute;left:454px;top:45px;width:1px;height:1px;background:#303030"></div><div style="position:absolute;left:455px;top:45px;width:1px;height:1px;background:#B82020"></div><div style="position:absolute;left:456px;top:45px;width:2px;height:1px;background:#FFFFFF"></div><div style="position:absolute;left:458px;top:45px;width:2px;height:1px;background:#B82020"></div><div style="position:absolute;left:460px;top:45px;width:2px;height:1px;background:#FFFFFF"></div><div style="position:absolute;left:462px;top:45px;width:2px;height:1px;background:#B82020"></div><div style="position:absolute;left:464px;top:45px;width:2px;height:1px;background:#FFFFFF"></div><div style="position:absolute;left:466px;top:45px;width:1px;height:1px;background:#B82020"></div><div style="position:absolute;left:467px;top:45px;width:1px;height:1px;background:#303030"></div><div style="position:absolute;left:454px;top:46px;width:1px;height:1px;background:#303030"></div><div style="position:absolute;left:455px;top:46px;width:12px;height:1px;background:#B82020"></div><div style="position:absolute;left:467px;top:46px;width:1px;height:1px;background:#303030"></div><div style="position:absolute;left:454px;top:47px;width:1px;height:1px;background:#303030"></div><div style="position:absolute;left:455px;top:47px;width:12px;height:1px;background:#A8A8A8"></div><div style="position:absolute;left:467px;top:47px;width:1px;height:1px;background:#303030"></div><div style="position:absolute;left:454px;top:48px;width:1px;height:1px;background:#303030"></div><div style="position:absolute;left:455px;top:48px;width:3px;height:1px;background:#FFFFFF"></div><div style="position:absolute;left:458px;top:48px;width:1px;height:1px;background:#A8A8A8"></div><div style="position:absolute;left:459px;top:48px;width:1px;height:1px;background:#FFFFFF"></div><div style="position:absolute;left:460px;top:48px;width:2px;height:1px;background:#1060FF"></div><div style="position:absolute;left:462px;top:48px;width:1px;height:1px;background:#FFFFFF"></div><div style="position:absolute;left:463px;top:48px;width:1px;height:1px;background:#A8A8A8"></div><div style="position:absolute;left:464px;top:48px;width:1px;height:1px;background:#FFFFFF"></div><div style="position:absolute;left:465px;top:48px;width:2px;height:1px;background:#1060FF"></div><div style="position:absolute;left:467px;top:48px;width:1px;height:1px;background:#303030"></div><div style="position:absolute;left:454px;top:49px;width:1px;height:1px;background:#303030"></div><div style="position:absolute;left:455px;top:49px;width:3px;height:1px;background:#FFFFFF"></div><div style="position:absolute;left:458px;top:49px;width:1px;height:1px;background:#A8A8A8"></div><div style="position:absolute;left:459px;top:49px;width:1px;height:1px;background:#FFFFFF"></div><div style="position:absolute;left:460px;top:49px;width:2px;height:1px;background:#1060FF"></div><div style="position:absolute;left:462px;top:49px;width:1px;height:1px;background:#FFFFFF"></div><div style="position:absolute;left:463px;top:49px;width:1px;height:1px;background:#A8A8A8"></div><div style="position:absolute;left:464px;top:49px;width:1px;height:1px;background:#FFFFFF"></div><div style="position:absolute;left:465px;top:49px;width:2px;height:1px;background:#1060FF"></div><div style="position:absolute;left:467px;top:49px;width:1px;height:1px;background:#303030"></div><div style="position:absolute;left:454px;top:50px;width:1px;height:1px;background:#303030"></div><div style="position:absolute;left:455px;top:50px;width:12px;height:1px;background:#A8A8A8"></div><div style="position:absolute;left:467px;top:50px;width:1px;height:1px;background:#303030"></div><div style="position:absolute;left:454px;top:51px;width:1px;height:1px;background:#303030"></div><div style="position:absolute;left:455px;top:51px;width:12px;height:1px;background:#A8A8A8"></div><div style="position:absolute;left:467px;top:51px;width:1px;height:1px;background:#303030"></div><div style="position:absolute;left:454px;top:52px;width:1px;height:1px;background:#303030"></div><div style="position:absolute;left:455px;top:52px;width:3px;height:1px;background:#FFFFFF"></div><div style="position:absolute;left:458px;top:52px;width:1px;height:1px;background:#A8A8A8"></div><div style="position:absolute;left:459px;top:52px;width:1px;height:1px;background:#FFFFFF"></div><div style="position:absolute;left:460px;top:52px;width:2px;height:1px;background:#1060FF"></div><div style="position:absolute;left:462px;top:52px;width:1px;height:1px;background:#FFFFFF"></div><div style="position:absolute;left:463px;top:52px;width:1px;height:1px;background:#A8A8A8"></div><div style="position:absolute;left:464px;top:52px;width:1px;height:1px;background:#FFFFFF"></div><div style="position:absolute;left:465px;top:52px;width:2px;height:1px;background:#1060FF"></div><div style="position:absolute;left:467px;top:52px;width:1px;height:1px;background:#303030"></div><div style="position:absolute;left:454px;top:53px;width:1px;height:1px;background:#303030"></div><div style="position:absolute;left:455px;top:53px;width:3px;height:1px;background:#FFFFFF"></div><div style="position:absolute;left:458px;top:53px;width:1px;height:1px;background:#A8A8A8"></div><div style="position:absolute;left:459px;top:53px;width:1px;height:1px;background:#FFFFFF"></div><div style="position:absolute;left:460px;top:53px;width:2px;height:1px;background:#1060FF"></div><div style="position:absolute;left:462px;top:53px;width:1px;height:1px;background:#FFFFFF"></div><div style="position:absolute;left:463px;top:53px;width:1px;height:1px;background:#A8A8A8"></div><div style="position:absolute;left:464px;top:53px;width:1px;height:1px;background:#FFFFFF"></div><div style="position:absolute;left:465px;top:53px;width:2px;height:1px;background:#1060FF"></div><div style="position:absolute;left:467px;top:53px;width:1px;height:1px;background:#303030"></div><div style="position:absolute;left:454px;top:54px;width:1px;height:1px;background:#303030"></div><div style="position:absolute;left:455px;top:54px;width:12px;height:1px;background:#A8A8A8"></div><div style="position:absolute;left:467px;top:54px;width:1px;height:1px;background:#303030"></div><div style="position:absolute;left:454px;top:55px;width:1px;height:1px;background:#303030"></div><div style="position:absolute;left:455px;top:55px;width:12px;height:1px;background:#A8A8A8"></div><div style="position:absolute;left:467px;top:55px;width:1px;height:1px;background:#303030"></div><div style="position:absolute;left:454px;top:56px;width:1px;height:1px;background:#303030"></div><div style="position:absolute;left:455px;top:56px;width:3px;height:1px;background:#FFFFFF"></div><div style="position:absolute;left:458px;top:56px;width:1px;height:1px;background:#A8A8A8"></div><div style="position:absolute;left:459px;top:56px;width:1px;height:1px;background:#FFFFFF"></div><div style="position:absolute;left:460px;top:56px;width:2px;height:1px;background:#1060FF"></div><div style="position:absolute;left:462px;top:56px;width:1px;height:1px;background:#FFFFFF"></div><div style="position:absolute;left:463px;top:56px;width:1px;height:1px;background:#A8A8A8"></div><div style="position:absolute;left:464px;top:56px;width:1px;height:1px;background:#FFFFFF"></div><div style="position:absolute;left:465px;top:56px;width:2px;height:1px;background:#1060FF"></div><div style="position:absolute;left:467px;top:56px;width:1px;height:1px;background:#303030"></div><div style="position:absolute;left:454px;top:57px;width:1px;height:1px;background:#303030"></div><div style="position:absolute;left:455px;top:57px;width:3px;height:1px;background:#FFFFFF"></div><div style="position:absolute;left:458px;top:57px;width:1px;height:1px;background:#A8A8A8"></div><div style="position:absolute;left:459px;top:57px;width:1px;height:1px;background:#FFFFFF"></div><div style="position:absolute;left:460px;top:57px;width:2px;height:1px;background:#1060FF"></div><div style="position:absolute;left:462px;top:57px;width:1px;height:1px;background:#FFFFFF"></div><div style="position:absolute;left:463px;top:57px;width:1px;height:1px;background:#A8A8A8"></div><div style="position:absolute;left:464px;top:57px;width:1px;height:1px;background:#FFFFFF"></div><div style="position:absolute;left:465px;top:57px;width:2px;height:1px;background:#1060FF"></div><div style="position:absolute;left:467px;top:57px;width:1px;height:1px;background:#303030"></div><div style="position:absolute;left:454px;top:58px;width:14px;height:1px;background:#303030"></div>
<div style="position:absolute;left:475px;top:42px;width:1px;height:18px;background:#808080;"></div>
<div style="position:absolute;left:476px;top:42px;width:1px;height:18px;background:#E6E6E6;"></div>
<svg style="position:absolute;left:482px;top:43px" width="18" height="17" shape-rendering="crispEdges"><rect x="1" y="2" width="14" height="12" fill="#0838B0"/><rect x="1" y="2" width="13" height="11" fill="#4878E0"/><rect x="2" y="3" width="12" height="10" fill="#E8F0FC"/><circle cx="11.5" cy="11.5" r="4.6" fill="#30A0F0" shape-rendering="auto"/><path d="M8.5 9 Q10 7.5 12 8 L11.5 10 L10 11.5 L9.5 13 Q8 12 8.5 9 Z" fill="#209040" shape-rendering="auto"/><path d="M13 10 Q15 9.5 15.8 11.5 Q15.5 14 14 15 L13.5 13 Z" fill="#209040" shape-rendering="auto"/><circle cx="10.5" cy="9.5" r="1.2" fill="#F0F8FF" shape-rendering="auto"/></svg>
<div style="position:absolute;left:0px;top:62px;width:1280px;height:1px;background:#808080;"></div>
<div style="position:absolute;left:0px;top:63px;width:1279px;height:1px;background:#404040;"></div>
<div style="position:absolute;left:0px;top:62px;width:1px;height:887px;background:#808080;"></div>
<div style="position:absolute;left:1px;top:63px;width:1px;height:885px;background:#404040;"></div>
<div style="position:absolute;left:0px;top:948px;width:1280px;height:1px;background:#D4D0C8;"></div>
<div style="position:absolute;left:0px;top:949px;width:1280px;height:1px;background:#E6E6E6;"></div>
<div style="position:absolute;left:1278px;top:63px;width:1px;height:886px;background:#D4D0C8;"></div>
<div style="position:absolute;left:1279px;top:62px;width:1px;height:888px;background:#E6E6E6;"></div>
<div style="position:absolute;left:2px;top:64px;width:638px;height:600px;background:#404040;"></div>
<div style="position:absolute;left:2px;top:64px;width:637px;height:599px;background:#D4D0C8;"></div>
<div style="position:absolute;left:3px;top:65px;width:636px;height:598px;background:#808080;"></div>
<div style="position:absolute;left:3px;top:65px;width:635px;height:597px;background:#E6E6E6;"></div>
<div style="position:absolute;left:4px;top:66px;width:634px;height:596px;background:#D4D0C8;"></div>
<div style="position:absolute;left:6px;top:68px;width:630px;height:18px;background:#808080;"></div>
<div style="position:absolute;left:13px;top:70px;width:10px;height:1px;background:#303020"></div><div style="position:absolute;left:13px;top:71px;width:1px;height:1px;background:#303020"></div><div style="position:absolute;left:14px;top:71px;width:1px;height:1px;background:#FFFFFF"></div><div style="position:absolute;left:15px;top:71px;width:1px;height:1px;background:#C02828"></div><div style="position:absolute;left:16px;top:71px;width:1px;height:1px;background:#FFFFFF"></div><div style="position:absolute;left:17px;top:71px;width:1px;height:1px;background:#C02828"></div><div style="position:absolute;left:18px;top:71px;width:1px;height:1px;background:#FFFFFF"></div><div style="position:absolute;left:19px;top:71px;width:1px;height:1px;background:#C02828"></div><div style="position:absolute;left:20px;top:71px;width:1px;height:1px;background:#FFFFFF"></div><div style="position:absolute;left:21px;top:71px;width:1px;height:1px;background:#C02828"></div><div style="position:absolute;left:22px;top:71px;width:1px;height:1px;background:#303020"></div><div style="position:absolute;left:23px;top:71px;width:1px;height:1px;background:#A8A078"></div><div style="position:absolute;left:13px;top:72px;width:1px;height:1px;background:#303020"></div><div style="position:absolute;left:14px;top:72px;width:8px;height:1px;background:#C02828"></div><div style="position:absolute;left:22px;top:72px;width:1px;height:1px;background:#303020"></div><div style="position:absolute;left:23px;top:72px;width:1px;height:1px;background:#A8A078"></div><div style="position:absolute;left:13px;top:73px;width:1px;height:1px;background:#303020"></div><div style="position:absolute;left:14px;top:73px;width:2px;height:1px;background:#FFFFFF"></div><div style="position:absolute;left:16px;top:73px;width:1px;height:1px;background:#1860F0"></div><div style="position:absolute;left:17px;top:73px;width:1px;height:1px;background:#FFFFFF"></div><div style="position:absolute;left:18px;top:73px;width:1px;height:1px;background:#1860F0"></div><div style="position:absolute;left:19px;top:73px;width:1px;height:1px;background:#FFFFFF"></div><div style="position:absolute;left:20px;top:73px;width:1px;height:1px;background:#1860F0"></div><div style="position:absolute;left:21px;top:73px;width:1px;height:1px;background:#FFFFFF"></div><div style="position:absolute;left:22px;top:73px;width:1px;height:1px;background:#303020"></div><div style="position:absolute;left:23px;top:73px;width:1px;height:1px;background:#A8A078"></div><div style="position:absolute;left:13px;top:74px;width:1px;height:1px;background:#303020"></div><div style="position:absolute;left:14px;top:74px;width:8px;height:1px;background:#FFFFFF"></div><div style="position:absolute;left:22px;top:74px;width:1px;height:1px;background:#303020"></div><div style="position:absolute;left:23px;top:74px;width:1px;height:1px;background:#A8A078"></div><div style="position:absolute;left:8px;top:75px;width:11px;height:1px;background:#70A8F0"></div><div style="position:absolute;left:19px;top:75px;width:1px;height:1px;background:#FFFFFF"></div><div style="position:absolute;left:20px;top:75px;width:1px;height:1px;background:#1860F0"></div><div style="position:absolute;left:21px;top:75px;width:1px;height:1px;background:#FFFFFF"></div><div style="position:absolute;left:22px;top:75px;width:1px;height:1px;background:#303020"></div><div style="position:absolute;left:23px;top:75px;width:1px;height:1px;background:#A8A078"></div><div style="position:absolute;left:8px;top:76px;width:1px;height:1px;background:#70A8F0"></div><div style="position:absolute;left:9px;top:76px;width:9px;height:1px;background:#FFFFFF"></div><div style="position:absolute;left:18px;top:76px;width:1px;height:1px;background:#0838A8"></div><div style="position:absolute;left:19px;top:76px;width:3px;height:1px;background:#FFFFFF"></div><div style="position:absolute;left:22px;top:76px;width:1px;height:1px;background:#303020"></div><div style="position:absolute;left:23px;top:76px;width:1px;height:1px;background:#A8A078"></div><div style="position:absolute;left:8px;top:77px;width:1px;height:1px;background:#70A8F0"></div><div style="position:absolute;left:9px;top:77px;width:1px;height:1px;background:#FFFFFF"></div><div style="position:absolute;left:10px;top:77px;width:1px;height:1px;background:#707070"></div><div style="position:absolute;left:11px;top:77px;width:2px;height:1px;background:#FFFFFF"></div><div style="position:absolute;left:13px;top:77px;width:2px;height:1px;background:#FFC800"></div><div style="position:absolute;left:15px;top:77px;width:3px;height:1px;background:#FFFFFF"></div><div style="position:absolute;left:18px;top:77px;width:1px;height:1px;background:#0838A8"></div><div style="position:absolute;left:19px;top:77px;width:1px;height:1px;background:#FFFFFF"></div><div style="position:absolute;left:20px;top:77px;width:1px;height:1px;background:#1860F0"></div><div style="position:absolute;left:21px;top:77px;width:1px;height:1px;background:#FFFFFF"></div><div style="position:absolute;left:22px;top:77px;width:1px;height:1px;background:#303020"></div><div style="position:absolute;left:23px;top:77px;width:1px;height:1px;background:#A8A078"></div><div style="position:absolute;left:8px;top:78px;width:1px;height:1px;background:#70A8F0"></div><div style="position:absolute;left:9px;top:78px;width:1px;height:1px;background:#FFFFFF"></div><div style="position:absolute;left:10px;top:78px;width:1px;height:1px;background:#707070"></div><div style="position:absolute;left:11px;top:78px;width:2px;height:1px;background:#1860F0"></div><div style="position:absolute;left:13px;top:78px;width:2px;height:1px;background:#FFC800"></div><div style="position:absolute;left:15px;top:78px;width:3px;height:1px;background:#FFFFFF"></div><div style="position:absolute;left:18px;top:78px;width:1px;height:1px;background:#0838A8"></div><div style="position:absolute;left:19px;top:78px;width:3px;height:1px;background:#FFFFFF"></div><div style="position:absolute;left:22px;top:78px;width:1px;height:1px;background:#303020"></div><div style="position:absolute;left:23px;top:78px;width:1px;height:1px;background:#A8A078"></div><div style="position:absolute;left:8px;top:79px;width:1px;height:1px;background:#70A8F0"></div><div style="position:absolute;left:9px;top:79px;width:1px;height:1px;background:#FFFFFF"></div><div style="position:absolute;left:10px;top:79px;width:1px;height:1px;background:#707070"></div><div style="position:absolute;left:11px;top:79px;width:2px;height:1px;background:#1860F0"></div><div style="position:absolute;left:13px;top:79px;width:2px;height:1px;background:#FFC800"></div><div style="position:absolute;left:15px;top:79px;width:2px;height:1px;background:#E02020"></div><div style="position:absolute;left:17px;top:79px;width:1px;height:1px;background:#FFFFFF"></div><div style="position:absolute;left:18px;top:79px;width:1px;height:1px;background:#0838A8"></div><div style="position:absolute;left:19px;top:79px;width:3px;height:1px;background:#FFFFFF"></div><div style="position:absolute;left:22px;top:79px;width:1px;height:1px;background:#303020"></div><div style="position:absolute;left:23px;top:79px;width:1px;height:1px;background:#A8A078"></div><div style="position:absolute;left:8px;top:80px;width:1px;height:1px;background:#70A8F0"></div><div style="position:absolute;left:9px;top:80px;width:1px;height:1px;background:#FFFFFF"></div><div style="position:absolute;left:10px;top:80px;width:1px;height:1px;background:#707070"></div><div style="position:absolute;left:11px;top:80px;width:2px;height:1px;background:#1860F0"></div><div style="position:absolute;left:13px;top:80px;width:2px;height:1px;background:#FFC800"></div><div style="position:absolute;left:15px;top:80px;width:2px;height:1px;background:#E02020"></div><div style="position:absolute;left:17px;top:80px;width:1px;height:1px;background:#FFFFFF"></div><div style="position:absolute;left:18px;top:80px;width:1px;height:1px;background:#0838A8"></div><div style="position:absolute;left:19px;top:80px;width:4px;height:1px;background:#303020"></div><div style="position:absolute;left:23px;top:80px;width:1px;height:1px;background:#A8A078"></div><div style="position:absolute;left:8px;top:81px;width:1px;height:1px;background:#70A8F0"></div><div style="position:absolute;left:9px;top:81px;width:1px;height:1px;background:#FFFFFF"></div><div style="position:absolute;left:10px;top:81px;width:1px;height:1px;background:#707070"></div><div style="position:absolute;left:11px;top:81px;width:2px;height:1px;background:#1860F0"></div><div style="position:absolute;left:13px;top:81px;width:2px;height:1px;background:#FFC800"></div><div style="position:absolute;left:15px;top:81px;width:2px;height:1px;background:#E02020"></div><div style="position:absolute;left:17px;top:81px;width:1px;height:1px;background:#FFFFFF"></div><div style="position:absolute;left:18px;top:81px;width:1px;height:1px;background:#0838A8"></div><div style="position:absolute;left:19px;top:81px;width:4px;height:1px;background:#A8A078"></div><div style="position:absolute;left:8px;top:82px;width:1px;height:1px;background:#70A8F0"></div><div style="position:absolute;left:9px;top:82px;width:9px;height:1px;background:#FFFFFF"></div><div style="position:absolute;left:18px;top:82px;width:1px;height:1px;background:#0838A8"></div><div style="position:absolute;left:19px;top:82px;width:1px;height:1px;background:#A8A078"></div><div style="position:absolute;left:8px;top:83px;width:11px;height:1px;background:#0838A8"></div><div style="position:absolute;left:19px;top:83px;width:1px;height:1px;background:#A8A078"></div><div style="position:absolute;left:9px;top:84px;width:11px;height:1px;background:#A8A078"></div>
<svg style="position:absolute;left:0;top:0;overflow:visible" width="1" height="1"><text x="25" y="81" font-family="'Liberation Sans', sans-serif" font-size="11" font-weight="bold" fill="#D4D0C8" text-anchor="start" style="white-space:pre;letter-spacing:0.33px">Line Plot of Proportion Plot (baseball)</text></svg>
<div style="position:absolute;left:584px;top:70px;width:16px;height:14px;background:#404040;"></div>
<div style="position:absolute;left:584px;top:70px;width:15px;height:13px;background:#ECECEC;"></div>
<div style="position:absolute;left:585px;top:71px;width:14px;height:12px;background:#808080;"></div>
<div style="position:absolute;left:585px;top:71px;width:13px;height:11px;background:#DEDCD6;"></div>
<div style="position:absolute;left:586px;top:72px;width:12px;height:10px;background:#D4D0C8;"></div>
<div style="position:absolute;left:588px;top:79px;width:6px;height:1px;background:#000"></div><div style="position:absolute;left:588px;top:80px;width:6px;height:1px;background:#000"></div>
<div style="position:absolute;left:600px;top:70px;width:16px;height:14px;background:#404040;"></div>
<div style="position:absolute;left:600px;top:70px;width:15px;height:13px;background:#ECECEC;"></div>
<div style="position:absolute;left:601px;top:71px;width:14px;height:12px;background:#808080;"></div>
<div style="position:absolute;left:601px;top:71px;width:13px;height:11px;background:#DEDCD6;"></div>
<div style="position:absolute;left:602px;top:72px;width:12px;height:10px;background:#D4D0C8;"></div>
<div style="position:absolute;left:603px;top:72px;width:9px;height:1px;background:#000"></div><div style="position:absolute;left:603px;top:73px;width:9px;height:1px;background:#000"></div><div style="position:absolute;left:603px;top:74px;width:1px;height:1px;background:#000"></div><div style="position:absolute;left:611px;top:74px;width:1px;height:1px;background:#000"></div><div style="position:absolute;left:603px;top:75px;width:1px;height:1px;background:#000"></div><div style="position:absolute;left:611px;top:75px;width:1px;height:1px;background:#000"></div><div style="position:absolute;left:603px;top:76px;width:1px;height:1px;background:#000"></div><div style="position:absolute;left:611px;top:76px;width:1px;height:1px;background:#000"></div><div style="position:absolute;left:603px;top:77px;width:1px;height:1px;background:#000"></div><div style="position:absolute;left:611px;top:77px;width:1px;height:1px;background:#000"></div><div style="position:absolute;left:603px;top:78px;width:1px;height:1px;background:#000"></div><div style="position:absolute;left:611px;top:78px;width:1px;height:1px;background:#000"></div><div style="position:absolute;left:603px;top:79px;width:1px;height:1px;background:#000"></div><div style="position:absolute;left:611px;top:79px;width:1px;height:1px;background:#000"></div><div style="position:absolute;left:603px;top:80px;width:9px;height:1px;background:#000"></div>
<div style="position:absolute;left:618px;top:70px;width:16px;height:14px;background:#404040;"></div>
<div style="position:absolute;left:618px;top:70px;width:15px;height:13px;background:#ECECEC;"></div>
<div style="position:absolute;left:619px;top:71px;width:14px;height:12px;background:#808080;"></div>
<div style="position:absolute;left:619px;top:71px;width:13px;height:11px;background:#DEDCD6;"></div>
<div style="position:absolute;left:620px;top:72px;width:12px;height:10px;background:#D4D0C8;"></div>
<div style="position:absolute;left:622px;top:73px;width:2px;height:1px;background:#000"></div><div style="position:absolute;left:628px;top:73px;width:2px;height:1px;background:#000"></div><div style="position:absolute;left:623px;top:74px;width:2px;height:1px;background:#000"></div><div style="position:absolute;left:627px;top:74px;width:2px;height:1px;background:#000"></div><div style="position:absolute;left:624px;top:75px;width:4px;height:1px;background:#000"></div><div style="position:absolute;left:625px;top:76px;width:2px;height:1px;background:#000"></div><div style="position:absolute;left:624px;top:77px;width:4px;height:1px;background:#000"></div><div style="position:absolute;left:623px;top:78px;width:2px;height:1px;background:#000"></div><div style="position:absolute;left:627px;top:78px;width:2px;height:1px;background:#000"></div><div style="position:absolute;left:622px;top:79px;width:2px;height:1px;background:#000"></div><div style="position:absolute;left:628px;top:79px;width:2px;height:1px;background:#000"></div>
<div style="position:absolute;left:6px;top:87px;width:630px;height:573px;background:#E6E6E6;"></div>
<div style="position:absolute;left:6px;top:87px;width:629px;height:572px;background:#808080;"></div>
<div style="position:absolute;left:7px;top:88px;width:628px;height:571px;background:#D4D0C8;"></div>
<div style="position:absolute;left:7px;top:88px;width:627px;height:570px;background:#404040;"></div>
<div style="position:absolute;left:8px;top:89px;width:626px;height:569px;background:#E8E8E8;"></div>
<div style="position:absolute;left:640px;top:506px;width:638px;height:442px;background:#404040;"></div>
<div style="position:absolute;left:640px;top:506px;width:637px;height:441px;background:#D4D0C8;"></div>
<div style="position:absolute;left:641px;top:507px;width:636px;height:440px;background:#808080;"></div>
<div style="position:absolute;left:641px;top:507px;width:635px;height:439px;background:#E6E6E6;"></div>
<div style="position:absolute;left:642px;top:508px;width:634px;height:438px;background:#D4D0C8;"></div>
<div style="position:absolute;left:644px;top:510px;width:630px;height:18px;background:#808080;"></div>
<div style="position:absolute;left:651px;top:512px;width:10px;height:1px;background:#303020"></div><div style="position:absolute;left:651px;top:513px;width:1px;height:1px;background:#303020"></div><div style="position:absolute;left:652px;top:513px;width:1px;height:1px;background:#FFFFFF"></div><div style="position:absolute;left:653px;top:513px;width:1px;height:1px;background:#C02828"></div><div style="position:absolute;left:654px;top:513px;width:1px;height:1px;background:#FFFFFF"></div><div style="position:absolute;left:655px;top:513px;width:1px;height:1px;background:#C02828"></div><div style="position:absolute;left:656px;top:513px;width:1px;height:1px;background:#FFFFFF"></div><div style="position:absolute;left:657px;top:513px;width:1px;height:1px;background:#C02828"></div><div style="position:absolute;left:658px;top:513px;width:1px;height:1px;background:#FFFFFF"></div><div style="position:absolute;left:659px;top:513px;width:1px;height:1px;background:#C02828"></div><div style="position:absolute;left:660px;top:513px;width:1px;height:1px;background:#303020"></div><div style="position:absolute;left:661px;top:513px;width:1px;height:1px;background:#A8A078"></div><div style="position:absolute;left:651px;top:514px;width:1px;height:1px;background:#303020"></div><div style="position:absolute;left:652px;top:514px;width:8px;height:1px;background:#C02828"></div><div style="position:absolute;left:660px;top:514px;width:1px;height:1px;background:#303020"></div><div style="position:absolute;left:661px;top:514px;width:1px;height:1px;background:#A8A078"></div><div style="position:absolute;left:651px;top:515px;width:1px;height:1px;background:#303020"></div><div style="position:absolute;left:652px;top:515px;width:2px;height:1px;background:#FFFFFF"></div><div style="position:absolute;left:654px;top:515px;width:1px;height:1px;background:#1860F0"></div><div style="position:absolute;left:655px;top:515px;width:1px;height:1px;background:#FFFFFF"></div><div style="position:absolute;left:656px;top:515px;width:1px;height:1px;background:#1860F0"></div><div style="position:absolute;left:657px;top:515px;width:1px;height:1px;background:#FFFFFF"></div><div style="position:absolute;left:658px;top:515px;width:1px;height:1px;background:#1860F0"></div><div style="position:absolute;left:659px;top:515px;width:1px;height:1px;background:#FFFFFF"></div><div style="position:absolute;left:660px;top:515px;width:1px;height:1px;background:#303020"></div><div style="position:absolute;left:661px;top:515px;width:1px;height:1px;background:#A8A078"></div><div style="position:absolute;left:651px;top:516px;width:1px;height:1px;background:#303020"></div><div style="position:absolute;left:652px;top:516px;width:8px;height:1px;background:#FFFFFF"></div><div style="position:absolute;left:660px;top:516px;width:1px;height:1px;background:#303020"></div><div style="position:absolute;left:661px;top:516px;width:1px;height:1px;background:#A8A078"></div><div style="position:absolute;left:646px;top:517px;width:11px;height:1px;background:#70A8F0"></div><div style="position:absolute;left:657px;top:517px;width:1px;height:1px;background:#FFFFFF"></div><div style="position:absolute;left:658px;top:517px;width:1px;height:1px;background:#1860F0"></div><div style="position:absolute;left:659px;top:517px;width:1px;height:1px;background:#FFFFFF"></div><div style="position:absolute;left:660px;top:517px;width:1px;height:1px;background:#303020"></div><div style="position:absolute;left:661px;top:517px;width:1px;height:1px;background:#A8A078"></div><div style="position:absolute;left:646px;top:518px;width:1px;height:1px;background:#70A8F0"></div><div style="position:absolute;left:647px;top:518px;width:9px;height:1px;background:#FFFFFF"></div><div style="position:absolute;left:656px;top:518px;width:1px;height:1px;background:#0838A8"></div><div style="position:absolute;left:657px;top:518px;width:3px;height:1px;background:#FFFFFF"></div><div style="position:absolute;left:660px;top:518px;width:1px;height:1px;background:#303020"></div><div style="position:absolute;left:661px;top:518px;width:1px;height:1px;background:#A8A078"></div><div style="position:absolute;left:646px;top:519px;width:1px;height:1px;background:#70A8F0"></div><div style="position:absolute;left:647px;top:519px;width:1px;height:1px;background:#FFFFFF"></div><div style="position:absolute;left:648px;top:519px;width:1px;height:1px;background:#707070"></div><div style="position:absolute;left:649px;top:519px;width:2px;height:1px;background:#FFFFFF"></div><div style="position:absolute;left:651px;top:519px;width:2px;height:1px;background:#FFC800"></div><div style="position:absolute;left:653px;top:519px;width:3px;height:1px;background:#FFFFFF"></div><div style="position:absolute;left:656px;top:519px;width:1px;height:1px;background:#0838A8"></div><div style="position:absolute;left:657px;top:519px;width:1px;height:1px;background:#FFFFFF"></div><div style="position:absolute;left:658px;top:519px;width:1px;height:1px;background:#1860F0"></div><div style="position:absolute;left:659px;top:519px;width:1px;height:1px;background:#FFFFFF"></div><div style="position:absolute;left:660px;top:519px;width:1px;height:1px;background:#303020"></div><div style="position:absolute;left:661px;top:519px;width:1px;height:1px;background:#A8A078"></div><div style="position:absolute;left:646px;top:520px;width:1px;height:1px;background:#70A8F0"></div><div style="position:absolute;left:647px;top:520px;width:1px;height:1px;background:#FFFFFF"></div><div style="position:absolute;left:648px;top:520px;width:1px;height:1px;background:#707070"></div><div style="position:absolute;left:649px;top:520px;width:2px;height:1px;background:#1860F0"></div><div style="position:absolute;left:651px;top:520px;width:2px;height:1px;background:#FFC800"></div><div style="position:absolute;left:653px;top:520px;width:3px;height:1px;background:#FFFFFF"></div><div style="position:absolute;left:656px;top:520px;width:1px;height:1px;background:#0838A8"></div><div style="position:absolute;left:657px;top:520px;width:3px;height:1px;background:#FFFFFF"></div><div style="position:absolute;left:660px;top:520px;width:1px;height:1px;background:#303020"></div><div style="position:absolute;left:661px;top:520px;width:1px;height:1px;background:#A8A078"></div><div style="position:absolute;left:646px;top:521px;width:1px;height:1px;background:#70A8F0"></div><div style="position:absolute;left:647px;top:521px;width:1px;height:1px;background:#FFFFFF"></div><div style="position:absolute;left:648px;top:521px;width:1px;height:1px;background:#707070"></div><div style="position:absolute;left:649px;top:521px;width:2px;height:1px;background:#1860F0"></div><div style="position:absolute;left:651px;top:521px;width:2px;height:1px;background:#FFC800"></div><div style="position:absolute;left:653px;top:521px;width:2px;height:1px;background:#E02020"></div><div style="position:absolute;left:655px;top:521px;width:1px;height:1px;background:#FFFFFF"></div><div style="position:absolute;left:656px;top:521px;width:1px;height:1px;background:#0838A8"></div><div style="position:absolute;left:657px;top:521px;width:3px;height:1px;background:#FFFFFF"></div><div style="position:absolute;left:660px;top:521px;width:1px;height:1px;background:#303020"></div><div style="position:absolute;left:661px;top:521px;width:1px;height:1px;background:#A8A078"></div><div style="position:absolute;left:646px;top:522px;width:1px;height:1px;background:#70A8F0"></div><div style="position:absolute;left:647px;top:522px;width:1px;height:1px;background:#FFFFFF"></div><div style="position:absolute;left:648px;top:522px;width:1px;height:1px;background:#707070"></div><div style="position:absolute;left:649px;top:522px;width:2px;height:1px;background:#1860F0"></div><div style="position:absolute;left:651px;top:522px;width:2px;height:1px;background:#FFC800"></div><div style="position:absolute;left:653px;top:522px;width:2px;height:1px;background:#E02020"></div><div style="position:absolute;left:655px;top:522px;width:1px;height:1px;background:#FFFFFF"></div><div style="position:absolute;left:656px;top:522px;width:1px;height:1px;background:#0838A8"></div><div style="position:absolute;left:657px;top:522px;width:4px;height:1px;background:#303020"></div><div style="position:absolute;left:661px;top:522px;width:1px;height:1px;background:#A8A078"></div><div style="position:absolute;left:646px;top:523px;width:1px;height:1px;background:#70A8F0"></div><div style="position:absolute;left:647px;top:523px;width:1px;height:1px;background:#FFFFFF"></div><div style="position:absolute;left:648px;top:523px;width:1px;height:1px;background:#707070"></div><div style="position:absolute;left:649px;top:523px;width:2px;height:1px;background:#1860F0"></div><div style="position:absolute;left:651px;top:523px;width:2px;height:1px;background:#FFC800"></div><div style="position:absolute;left:653px;top:523px;width:2px;height:1px;background:#E02020"></div><div style="position:absolute;left:655px;top:523px;width:1px;height:1px;background:#FFFFFF"></div><div style="position:absolute;left:656px;top:523px;width:1px;height:1px;background:#0838A8"></div><div style="position:absolute;left:657px;top:523px;width:4px;height:1px;background:#A8A078"></div><div style="position:absolute;left:646px;top:524px;width:1px;height:1px;background:#70A8F0"></div><div style="position:absolute;left:647px;top:524px;width:9px;height:1px;background:#FFFFFF"></div><div style="position:absolute;left:656px;top:524px;width:1px;height:1px;background:#0838A8"></div><div style="position:absolute;left:657px;top:524px;width:1px;height:1px;background:#A8A078"></div><div style="position:absolute;left:646px;top:525px;width:11px;height:1px;background:#0838A8"></div><div style="position:absolute;left:657px;top:525px;width:1px;height:1px;background:#A8A078"></div><div style="position:absolute;left:647px;top:526px;width:11px;height:1px;background:#A8A078"></div>
<svg style="position:absolute;left:0;top:0;overflow:visible" width="1" height="1"><text x="663" y="523" font-family="'Liberation Sans', sans-serif" font-size="11" font-weight="bold" fill="#D4D0C8" text-anchor="start" style="white-space:pre;letter-spacing:0.46px">Scatter Plot of _Pattern_ (baseball):2</text></svg>
<div style="position:absolute;left:1222px;top:512px;width:16px;height:14px;background:#404040;"></div>
<div style="position:absolute;left:1222px;top:512px;width:15px;height:13px;background:#ECECEC;"></div>
<div style="position:absolute;left:1223px;top:513px;width:14px;height:12px;background:#808080;"></div>
<div style="position:absolute;left:1223px;top:513px;width:13px;height:11px;background:#DEDCD6;"></div>
<div style="position:absolute;left:1224px;top:514px;width:12px;height:10px;background:#D4D0C8;"></div>
<div style="position:absolute;left:1226px;top:521px;width:6px;height:1px;background:#000"></div><div style="position:absolute;left:1226px;top:522px;width:6px;height:1px;background:#000"></div>
<div style="position:absolute;left:1238px;top:512px;width:16px;height:14px;background:#404040;"></div>
<div style="position:absolute;left:1238px;top:512px;width:15px;height:13px;background:#ECECEC;"></div>
<div style="position:absolute;left:1239px;top:513px;width:14px;height:12px;background:#808080;"></div>
<div style="position:absolute;left:1239px;top:513px;width:13px;height:11px;background:#DEDCD6;"></div>
<div style="position:absolute;left:1240px;top:514px;width:12px;height:10px;background:#D4D0C8;"></div>
<div style="position:absolute;left:1241px;top:514px;width:9px;height:1px;background:#000"></div><div style="position:absolute;left:1241px;top:515px;width:9px;height:1px;background:#000"></div><div style="position:absolute;left:1241px;top:516px;width:1px;height:1px;background:#000"></div><div style="position:absolute;left:1249px;top:516px;width:1px;height:1px;background:#000"></div><div style="position:absolute;left:1241px;top:517px;width:1px;height:1px;background:#000"></div><div style="position:absolute;left:1249px;top:517px;width:1px;height:1px;background:#000"></div><div style="position:absolute;left:1241px;top:518px;width:1px;height:1px;background:#000"></div><div style="position:absolute;left:1249px;top:518px;width:1px;height:1px;background:#000"></div><div style="position:absolute;left:1241px;top:519px;width:1px;height:1px;background:#000"></div><div style="position:absolute;left:1249px;top:519px;width:1px;height:1px;background:#000"></div><div style="position:absolute;left:1241px;top:520px;width:1px;height:1px;background:#000"></div><div style="position:absolute;left:1249px;top:520px;width:1px;height:1px;background:#000"></div><div style="position:absolute;left:1241px;top:521px;width:1px;height:1px;background:#000"></div><div style="position:absolute;left:1249px;top:521px;width:1px;height:1px;background:#000"></div><div style="position:absolute;left:1241px;top:522px;width:9px;height:1px;background:#000"></div>
<div style="position:absolute;left:1256px;top:512px;width:16px;height:14px;background:#404040;"></div>
<div style="position:absolute;left:1256px;top:512px;width:15px;height:13px;background:#ECECEC;"></div>
<div style="position:absolute;left:1257px;top:513px;width:14px;height:12px;background:#808080;"></div>
<div style="position:absolute;left:1257px;top:513px;width:13px;height:11px;background:#DEDCD6;"></div>
<div style="position:absolute;left:1258px;top:514px;width:12px;height:10px;background:#D4D0C8;"></div>
<div style="position:absolute;left:1260px;top:515px;width:2px;height:1px;background:#000"></div><div style="position:absolute;left:1266px;top:515px;width:2px;height:1px;background:#000"></div><div style="position:absolute;left:1261px;top:516px;width:2px;height:1px;background:#000"></div><div style="position:absolute;left:1265px;top:516px;width:2px;height:1px;background:#000"></div><div style="position:absolute;left:1262px;top:517px;width:4px;height:1px;background:#000"></div><div style="position:absolute;left:1263px;top:518px;width:2px;height:1px;background:#000"></div><div style="position:absolute;left:1262px;top:519px;width:4px;height:1px;background:#000"></div><div style="position:absolute;left:1261px;top:520px;width:2px;height:1px;background:#000"></div><div style="position:absolute;left:1265px;top:520px;width:2px;height:1px;background:#000"></div><div style="position:absolute;left:1260px;top:521px;width:2px;height:1px;background:#000"></div><div style="position:absolute;left:1266px;top:521px;width:2px;height:1px;background:#000"></div>
<div style="position:absolute;left:644px;top:529px;width:630px;height:415px;background:#E6E6E6;"></div>
<div style="position:absolute;left:644px;top:529px;width:629px;height:414px;background:#808080;"></div>
<div style="position:absolute;left:645px;top:530px;width:628px;height:413px;background:#D4D0C8;"></div>
<div style="position:absolute;left:645px;top:530px;width:627px;height:412px;background:#404040;"></div>
<div style="position:absolute;left:646px;top:531px;width:626px;height:411px;background:#E8E8E8;"></div>
<svg style="position:absolute;left:0;top:0" width="1280" height="1000" shape-rendering="crispEdges" font-family="Liberation Sans, sans-serif"><text x="330" y="121" font-size="15" font-weight="bold" text-anchor="middle" >Eigenvalue Proportions (Scree)</text><rect x="102" y="130" width="457" height="288" fill="#fff"/><rect x="101" y="129" width="459" height="1" fill="#000"/><rect x="101" y="418" width="459" height="1" fill="#000"/><rect x="101" y="129" width="1" height="290" fill="#000"/><rect x="559" y="129" width="1" height="290" fill="#000"/><rect x="95" y="172" width="6" height="1" fill="#000"/><text x="93" y="176" font-size="12" font-weight="normal" text-anchor="end" >6</text><rect x="95" y="246" width="6" height="1" fill="#000"/><text x="93" y="250" font-size="12" font-weight="normal" text-anchor="end" >4</text><rect x="95" y="321" width="6" height="1" fill="#000"/><text x="93" y="325" font-size="12" font-weight="normal" text-anchor="end" >2</text><rect x="95" y="396" width="6" height="1" fill="#000"/><text x="93" y="400" font-size="12" font-weight="normal" text-anchor="end" >0</text><rect x="125" y="419" width="1" height="6" fill="#000"/><text x="124.5" y="436" font-size="12" font-weight="normal" text-anchor="middle" >1</text><rect x="176" y="419" width="1" height="6" fill="#000"/><text x="175.5" y="436" font-size="12" font-weight="normal" text-anchor="middle" >2</text><rect x="228" y="419" width="1" height="6" fill="#000"/><text x="227.5" y="436" font-size="12" font-weight="normal" text-anchor="middle" >3</text><rect x="279" y="419" width="1" height="6" fill="#000"/><text x="278.5" y="436" font-size="12" font-weight="normal" text-anchor="middle" >4</text><rect x="330" y="419" width="1" height="6" fill="#000"/><text x="329.5" y="436" font-size="12" font-weight="normal" text-anchor="middle" >5</text><rect x="381" y="419" width="1" height="6" fill="#000"/><text x="380.5" y="436" font-size="12" font-weight="normal" text-anchor="middle" >6</text><rect x="433" y="419" width="1" height="6" fill="#000"/><text x="432.5" y="436" font-size="12" font-weight="normal" text-anchor="middle" >7</text><rect x="484" y="419" width="1" height="6" fill="#000"/><text x="483.5" y="436" font-size="12" font-weight="normal" text-anchor="middle" >8</text><rect x="535" y="419" width="1" height="6" fill="#000"/><text x="534.5" y="436" font-size="12" font-weight="normal" text-anchor="middle" >9</text><rect x="558" y="157" width="2" height="239" fill="#000"/><rect x="560" y="157" width="6" height="1" fill="#000"/><text x="569" y="161" font-size="12" font-weight="normal" text-anchor="start" >1</text><rect x="560" y="204" width="6" height="1" fill="#000"/><text x="569" y="208" font-size="12" font-weight="normal" text-anchor="start" >0.8</text><rect x="560" y="252" width="6" height="1" fill="#000"/><text x="569" y="256" font-size="12" font-weight="normal" text-anchor="start" >0.6</text><rect x="560" y="300" width="6" height="1" fill="#000"/><text x="569" y="304" font-size="12" font-weight="normal" text-anchor="start" >0.4</text><rect x="560" y="347" width="6" height="1" fill="#000"/><text x="569" y="351" font-size="12" font-weight="normal" text-anchor="start" >0.2</text><rect x="560" y="395" width="6" height="1" fill="#000"/><text x="569" y="399" font-size="12" font-weight="normal" text-anchor="start" >0</text><text x="330" y="458" font-size="13" font-weight="bold" text-anchor="middle" >Factor</text><text x="0" y="0" font-size="12.7" font-weight="bold" text-anchor="middle" transform="translate(71.2,274) rotate(-90)">Eigenvalues</text><text x="0" y="0" font-size="12" font-weight="normal" text-anchor="middle" transform="translate(616.5,274) rotate(90)">Proportion</text><polyline points="125.5,218.5 176.5,168.5 228.5,154.5 279.5,148.5 330.5,144.5 381.5,145.5 433.5,145.5 484.5,148.5 535.5,155.5" fill="none" stroke="#8FB2C8" stroke-width="1"/><polyline points="125.5,218.5 176.5,346.5 228.5,382.5 279.5,390.5 330.5,391.5 381.5,396.5 433.5,396.5 484.5,398.5 535.5,403.5" fill="none" stroke="#000" stroke-width="1"/><rect x="124" y="217" width="2" height="2" fill="#000"/><rect x="175" y="167" width="2" height="2" fill="#000"/><rect x="227" y="153" width="2" height="2" fill="#000"/><rect x="278" y="147" width="2" height="2" fill="#000"/><rect x="329" y="143" width="2" height="2" fill="#000"/><rect x="380" y="144" width="2" height="2" fill="#000"/><rect x="432" y="144" width="2" height="2" fill="#000"/><rect x="483" y="147" width="2" height="2" fill="#000"/><rect x="534" y="154" width="2" height="2" fill="#000"/><rect x="124" y="217" width="2" height="2" fill="#000"/><rect x="175" y="345" width="2" height="2" fill="#000"/><rect x="227" y="381" width="2" height="2" fill="#000"/><rect x="278" y="389" width="2" height="2" fill="#000"/><rect x="329" y="390" width="2" height="2" fill="#000"/><rect x="380" y="395" width="2" height="2" fill="#000"/><rect x="432" y="395" width="2" height="2" fill="#000"/><rect x="483" y="397" width="2" height="2" fill="#000"/><rect x="534" y="402" width="2" height="2" fill="#000"/><rect x="453.5" y="254.5" width="97" height="39" fill="#fff" stroke="#000"/><rect x="459" y="267" width="26" height="1" fill="#8FB2C8"/><rect x="459" y="280" width="26" height="1" fill="#000"/><text x="492" y="271" font-size="10.3" font-weight="normal" text-anchor="start" >Cumulative</text><text x="492" y="284" font-size="10.3" font-weight="normal" text-anchor="start" >Proportion</text></svg>
<svg style="position:absolute;left:0;top:0" width="1280" height="1000" shape-rendering="crispEdges" font-family="Liberation Sans, sans-serif"><text x="992.5" y="563" font-size="15" font-weight="bold" text-anchor="middle" >Rotated Factor Pattern</text><rect x="849" y="572" width="288" height="288" fill="#fff"/><rect x="848" y="571" width="290" height="1" fill="#000"/><rect x="848" y="860" width="290" height="1" fill="#000"/><rect x="848" y="571" width="1" height="290" fill="#000"/><rect x="1137" y="571" width="1" height="290" fill="#000"/><rect x="842" y="586" width="6" height="1" fill="#000"/><text x="840" y="590" font-size="12" font-weight="normal" text-anchor="end" >1</text><rect x="842" y="612" width="6" height="1" fill="#000"/><text x="840" y="616" font-size="12" font-weight="normal" text-anchor="end" >0.8</text><rect x="842" y="638" width="6" height="1" fill="#000"/><text x="840" y="642" font-size="12" font-weight="normal" text-anchor="end" >0.6</text><rect x="842" y="664" width="6" height="1" fill="#000"/><text x="840" y="668" font-size="12" font-weight="normal" text-anchor="end" >0.4</text><rect x="842" y="690" width="6" height="1" fill="#000"/><text x="840" y="694" font-size="12" font-weight="normal" text-anchor="end" >0.2</text><rect x="842" y="716" width="6" height="1" fill="#000"/><text x="840" y="720" font-size="12" font-weight="normal" text-anchor="end" >0</text><rect x="842" y="741" width="6" height="1" fill="#000"/><text x="840" y="745" font-size="12" font-weight="normal" text-anchor="end" >-0.2</text><rect x="842" y="767" width="6" height="1" fill="#000"/><text x="840" y="771" font-size="12" font-weight="normal" text-anchor="end" >-0.4</text><rect x="842" y="793" width="6" height="1" fill="#000"/><text x="840" y="797" font-size="12" font-weight="normal" text-anchor="end" >-0.6</text><rect x="842" y="819" width="6" height="1" fill="#000"/><text x="840" y="823" font-size="12" font-weight="normal" text-anchor="end" >-0.8</text><rect x="842" y="845" width="6" height="1" fill="#000"/><text x="840" y="849" font-size="12" font-weight="normal" text-anchor="end" >-1</text><rect x="863" y="861" width="1" height="6" fill="#000"/><text x="862.5" y="878" font-size="12" font-weight="normal" text-anchor="middle" >-1</text><rect x="889" y="861" width="1" height="6" fill="#000"/><text x="888.5" y="878" font-size="12" font-weight="normal" text-anchor="middle" >-0.8</text><rect x="915" y="861" width="1" height="6" fill="#000"/><text x="914.5" y="878" font-size="12" font-weight="normal" text-anchor="middle" >-0.6</text><rect x="941" y="861" width="1" height="6" fill="#000"/><text x="940.5" y="878" font-size="12" font-weight="normal" text-anchor="middle" >-0.4</text><rect x="967" y="861" width="1" height="6" fill="#000"/><text x="966.5" y="878" font-size="12" font-weight="normal" text-anchor="middle" >-0.2</text><rect x="993" y="861" width="1" height="6" fill="#000"/><text x="992.5" y="878" font-size="12" font-weight="normal" text-anchor="middle" >0</text><rect x="1018" y="861" width="1" height="6" fill="#000"/><text x="1017.5" y="878" font-size="12" font-weight="normal" text-anchor="middle" >0.2</text><rect x="1044" y="861" width="1" height="6" fill="#000"/><text x="1043.5" y="878" font-size="12" font-weight="normal" text-anchor="middle" >0.4</text><rect x="1070" y="861" width="1" height="6" fill="#000"/><text x="1069.5" y="878" font-size="12" font-weight="normal" text-anchor="middle" >0.6</text><rect x="1096" y="861" width="1" height="6" fill="#000"/><text x="1095.5" y="878" font-size="12" font-weight="normal" text-anchor="middle" >0.8</text><rect x="1122" y="861" width="1" height="6" fill="#000"/><text x="1121.5" y="878" font-size="12" font-weight="normal" text-anchor="middle" >1</text><text x="992.5" y="900" font-size="12.5" font-weight="bold" text-anchor="middle" >Pattern1</text><text x="0" y="0" font-size="12.5" font-weight="bold" text-anchor="middle" transform="translate(804,716) rotate(-90)">Pattern2</text><rect x="850" y="716" width="6" height="1" fill="#0000FF"/><rect x="859" y="716" width="6" height="1" fill="#0000FF"/><rect x="868" y="716" width="6" height="1" fill="#0000FF"/><rect x="877" y="716" width="6" height="1" fill="#0000FF"/><rect x="886" y="716" width="6" height="1" fill="#0000FF"/><rect x="895" y="716" width="6" height="1" fill="#0000FF"/><rect x="904" y="716" width="6" height="1" fill="#0000FF"/><rect x="913" y="716" width="6" height="1" fill="#0000FF"/><rect x="922" y="716" width="6" height="1" fill="#0000FF"/><rect x="931" y="716" width="6" height="1" fill="#0000FF"/><rect x="940" y="716" width="6" height="1" fill="#0000FF"/><rect x="949" y="716" width="6" height="1" fill="#0000FF"/><rect x="958" y="716" width="6" height="1" fill="#0000FF"/><rect x="967" y="716" width="6" height="1" fill="#0000FF"/><rect x="976" y="716" width="6" height="1" fill="#0000FF"/><rect x="985" y="716" width="6" height="1" fill="#0000FF"/><rect x="994" y="716" width="6" height="1" fill="#0000FF"/><rect x="1003" y="716" width="6" height="1" fill="#0000FF"/><rect x="1012" y="716" width="6" height="1" fill="#0000FF"/><rect x="1021" y="716" width="6" height="1" fill="#0000FF"/><rect x="1030" y="716" width="6" height="1" fill="#0000FF"/><rect x="1039" y="716" width="6" height="1" fill="#0000FF"/><rect x="1048" y="716" width="6" height="1" fill="#0000FF"/><rect x="1057" y="716" width="6" height="1" fill="#0000FF"/><rect x="1066" y="716" width="6" height="1" fill="#0000FF"/><rect x="1075" y="716" width="6" height="1" fill="#0000FF"/><rect x="1084" y="716" width="6" height="1" fill="#0000FF"/><rect x="1093" y="716" width="6" height="1" fill="#0000FF"/><rect x="1102" y="716" width="6" height="1" fill="#0000FF"/><rect x="1111" y="716" width="6" height="1" fill="#0000FF"/><rect x="1120" y="716" width="6" height="1" fill="#0000FF"/><rect x="1129" y="716" width="6" height="1" fill="#0000FF"/><rect x="993" y="573" width="1" height="6" fill="#0000FF"/><rect x="993" y="582" width="1" height="6" fill="#0000FF"/><rect x="993" y="591" width="1" height="6" fill="#0000FF"/><rect x="993" y="600" width="1" height="6" fill="#0000FF"/><rect x="993" y="609" width="1" height="6" fill="#0000FF"/><rect x="993" y="618" width="1" height="6" fill="#0000FF"/><rect x="993" y="627" width="1" height="6" fill="#0000FF"/><rect x="993" y="636" width="1" height="6" fill="#0000FF"/><rect x="993" y="645" width="1" height="6" fill="#0000FF"/><rect x="993" y="654" width="1" height="6" fill="#0000FF"/><rect x="993" y="663" width="1" height="6" fill="#0000FF"/><rect x="993" y="672" width="1" height="6" fill="#0000FF"/><rect x="993" y="681" width="1" height="6" fill="#0000FF"/><rect x="993" y="690" width="1" height="6" fill="#0000FF"/><rect x="993" y="699" width="1" height="6" fill="#0000FF"/><rect x="993" y="708" width="1" height="6" fill="#0000FF"/><rect x="993" y="717" width="1" height="6" fill="#0000FF"/><rect x="993" y="726" width="1" height="6" fill="#0000FF"/><rect x="993" y="735" width="1" height="6" fill="#0000FF"/><rect x="993" y="744" width="1" height="6" fill="#0000FF"/><rect x="993" y="753" width="1" height="6" fill="#0000FF"/><rect x="993" y="762" width="1" height="6" fill="#0000FF"/><rect x="993" y="771" width="1" height="6" fill="#0000FF"/><rect x="993" y="780" width="1" height="6" fill="#0000FF"/><rect x="993" y="789" width="1" height="6" fill="#0000FF"/><rect x="993" y="798" width="1" height="6" fill="#0000FF"/><rect x="993" y="807" width="1" height="6" fill="#0000FF"/><rect x="993" y="816" width="1" height="6" fill="#0000FF"/><rect x="993" y="825" width="1" height="6" fill="#0000FF"/><rect x="993" y="834" width="1" height="6" fill="#0000FF"/><rect x="993" y="843" width="1" height="6" fill="#0000FF"/><rect x="993" y="852" width="1" height="6" fill="#0000FF"/><rect x="979" y="702" width="4" height="4" fill="#000"/><rect x="994" y="728" width="4" height="4" fill="#000"/><rect x="1004" y="603" width="4" height="4" fill="#000"/><rect x="1040" y="628" width="2" height="2" fill="#000"/><rect x="1027" y="695" width="2" height="2" fill="#000"/><rect x="1086" y="710" width="2" height="2" fill="#000"/><rect x="1102" y="704" width="2" height="2" fill="#000"/><rect x="1112" y="705" width="2" height="2" fill="#000"/><rect x="1111" y="712" width="4" height="4" fill="#000"/><text x="764" y="935" font-size="12" font-weight="normal" text-anchor="start" >x</text></svg>
<div style="position:absolute;left:2px;top:473px;width:760px;height:475px;background:#404040;"></div>
<div style="position:absolute;left:2px;top:473px;width:759px;height:474px;background:#D4D0C8;"></div>
<div style="position:absolute;left:3px;top:474px;width:758px;height:473px;background:#808080;"></div>
<div style="position:absolute;left:3px;top:474px;width:757px;height:472px;background:#E6E6E6;"></div>
<div style="position:absolute;left:4px;top:475px;width:756px;height:471px;background:#D4D0C8;"></div>
<div style="position:absolute;left:6px;top:477px;width:752px;height:18px;background:#808080;"></div>
<div style="position:absolute;left:10px;top:479px;width:8px;height:1px;background:#70A8F0"></div><div style="position:absolute;left:18px;top:479px;width:1px;height:1px;background:#0838A8"></div><div style="position:absolute;left:10px;top:480px;width:1px;height:1px;background:#70A8F0"></div><div style="position:absolute;left:11px;top:480px;width:6px;height:1px;background:#F4F8FF"></div><div style="position:absolute;left:17px;top:480px;width:1px;height:1px;background:#70A8F0"></div><div style="position:absolute;left:18px;top:480px;width:1px;height:1px;background:#F4F8FF"></div><div style="position:absolute;left:19px;top:480px;width:1px;height:1px;background:#0838A8"></div><div style="position:absolute;left:10px;top:481px;width:1px;height:1px;background:#70A8F0"></div><div style="position:absolute;left:11px;top:481px;width:1px;height:1px;background:#F4F8FF"></div><div style="position:absolute;left:12px;top:481px;width:2px;height:1px;background:#082890"></div><div style="position:absolute;left:14px;top:481px;width:3px;height:1px;background:#F4F8FF"></div><div style="position:absolute;left:17px;top:481px;width:1px;height:1px;background:#70A8F0"></div><div style="position:absolute;left:18px;top:481px;width:2px;height:1px;background:#F4F8FF"></div><div style="position:absolute;left:20px;top:481px;width:1px;height:1px;background:#0838A8"></div><div style="position:absolute;left:10px;top:482px;width:1px;height:1px;background:#70A8F0"></div><div style="position:absolute;left:11px;top:482px;width:7px;height:1px;background:#F4F8FF"></div><div style="position:absolute;left:18px;top:482px;width:4px;height:1px;background:#0838A8"></div><div style="position:absolute;left:10px;top:483px;width:1px;height:1px;background:#70A8F0"></div><div style="position:absolute;left:11px;top:483px;width:1px;height:1px;background:#F4F8FF"></div><div style="position:absolute;left:12px;top:483px;width:4px;height:1px;background:#3068D0"></div><div style="position:absolute;left:16px;top:483px;width:5px;height:1px;background:#F4F8FF"></div><div style="position:absolute;left:21px;top:483px;width:1px;height:1px;background:#0838A8"></div><div style="position:absolute;left:10px;top:484px;width:1px;height:1px;background:#70A8F0"></div><div style="position:absolute;left:11px;top:484px;width:10px;height:1px;background:#F4F8FF"></div><div style="position:absolute;left:21px;top:484px;width:1px;height:1px;background:#0838A8"></div><div style="position:absolute;left:10px;top:485px;width:1px;height:1px;background:#70A8F0"></div><div style="position:absolute;left:11px;top:485px;width:1px;height:1px;background:#F4F8FF"></div><div style="position:absolute;left:12px;top:485px;width:3px;height:1px;background:#3068D0"></div><div style="position:absolute;left:15px;top:485px;width:6px;height:1px;background:#F4F8FF"></div><div style="position:absolute;left:21px;top:485px;width:1px;height:1px;background:#0838A8"></div><div style="position:absolute;left:10px;top:486px;width:1px;height:1px;background:#70A8F0"></div><div style="position:absolute;left:11px;top:486px;width:10px;height:1px;background:#F4F8FF"></div><div style="position:absolute;left:21px;top:486px;width:1px;height:1px;background:#0838A8"></div><div style="position:absolute;left:10px;top:487px;width:1px;height:1px;background:#70A8F0"></div><div style="position:absolute;left:11px;top:487px;width:1px;height:1px;background:#F4F8FF"></div><div style="position:absolute;left:12px;top:487px;width:8px;height:1px;background:#3870D8"></div><div style="position:absolute;left:20px;top:487px;width:1px;height:1px;background:#F4F8FF"></div><div style="position:absolute;left:21px;top:487px;width:1px;height:1px;background:#0838A8"></div><div style="position:absolute;left:10px;top:488px;width:1px;height:1px;background:#70A8F0"></div><div style="position:absolute;left:11px;top:488px;width:1px;height:1px;background:#F4F8FF"></div><div style="position:absolute;left:12px;top:488px;width:1px;height:1px;background:#3870D8"></div><div style="position:absolute;left:13px;top:488px;width:2px;height:1px;background:#FFC000"></div><div style="position:absolute;left:15px;top:488px;width:1px;height:1px;background:#3870D8"></div><div style="position:absolute;left:16px;top:488px;width:3px;height:1px;background:#20C020"></div><div style="position:absolute;left:19px;top:488px;width:1px;height:1px;background:#3870D8"></div><div style="position:absolute;left:20px;top:488px;width:1px;height:1px;background:#F4F8FF"></div><div style="position:absolute;left:21px;top:488px;width:1px;height:1px;background:#0838A8"></div><div style="position:absolute;left:10px;top:489px;width:1px;height:1px;background:#70A8F0"></div><div style="position:absolute;left:11px;top:489px;width:1px;height:1px;background:#F4F8FF"></div><div style="position:absolute;left:12px;top:489px;width:1px;height:1px;background:#3870D8"></div><div style="position:absolute;left:13px;top:489px;width:2px;height:1px;background:#FFC000"></div><div style="position:absolute;left:15px;top:489px;width:1px;height:1px;background:#3870D8"></div><div style="position:absolute;left:16px;top:489px;width:3px;height:1px;background:#20C020"></div><div style="position:absolute;left:19px;top:489px;width:1px;height:1px;background:#3870D8"></div><div style="position:absolute;left:20px;top:489px;width:1px;height:1px;background:#F4F8FF"></div><div style="position:absolute;left:21px;top:489px;width:1px;height:1px;background:#0838A8"></div><div style="position:absolute;left:10px;top:490px;width:1px;height:1px;background:#70A8F0"></div><div style="position:absolute;left:11px;top:490px;width:1px;height:1px;background:#F4F8FF"></div><div style="position:absolute;left:12px;top:490px;width:8px;height:1px;background:#3870D8"></div><div style="position:absolute;left:20px;top:490px;width:1px;height:1px;background:#F4F8FF"></div><div style="position:absolute;left:21px;top:490px;width:1px;height:1px;background:#0838A8"></div><div style="position:absolute;left:10px;top:491px;width:1px;height:1px;background:#70A8F0"></div><div style="position:absolute;left:11px;top:491px;width:10px;height:1px;background:#F4F8FF"></div><div style="position:absolute;left:21px;top:491px;width:1px;height:1px;background:#0838A8"></div><div style="position:absolute;left:10px;top:492px;width:12px;height:1px;background:#0838A8"></div>
<svg style="position:absolute;left:0;top:0;overflow:visible" width="1" height="1"><text x="25" y="490" font-family="'Liberation Sans', sans-serif" font-size="11" font-weight="bold" fill="#D4D0C8" text-anchor="start" style="white-space:pre;letter-spacing:0.38px">Output1</text></svg>
<div style="position:absolute;left:706px;top:479px;width:16px;height:14px;background:#404040;"></div>
<div style="position:absolute;left:706px;top:479px;width:15px;height:13px;background:#ECECEC;"></div>
<div style="position:absolute;left:707px;top:480px;width:14px;height:12px;background:#808080;"></div>
<div style="position:absolute;left:707px;top:480px;width:13px;height:11px;background:#DEDCD6;"></div>
<div style="position:absolute;left:708px;top:481px;width:12px;height:10px;background:#D4D0C8;"></div>
<div style="position:absolute;left:710px;top:488px;width:6px;height:1px;background:#000"></div><div style="position:absolute;left:710px;top:489px;width:6px;height:1px;background:#000"></div>
<div style="position:absolute;left:722px;top:479px;width:16px;height:14px;background:#404040;"></div>
<div style="position:absolute;left:722px;top:479px;width:15px;height:13px;background:#ECECEC;"></div>
<div style="position:absolute;left:723px;top:480px;width:14px;height:12px;background:#808080;"></div>
<div style="position:absolute;left:723px;top:480px;width:13px;height:11px;background:#DEDCD6;"></div>
<div style="position:absolute;left:724px;top:481px;width:12px;height:10px;background:#D4D0C8;"></div>
<div style="position:absolute;left:725px;top:481px;width:9px;height:1px;background:#000"></div><div style="position:absolute;left:725px;top:482px;width:9px;height:1px;background:#000"></div><div style="position:absolute;left:725px;top:483px;width:1px;height:1px;background:#000"></div><div style="position:absolute;left:733px;top:483px;width:1px;height:1px;background:#000"></div><div style="position:absolute;left:725px;top:484px;width:1px;height:1px;background:#000"></div><div style="position:absolute;left:733px;top:484px;width:1px;height:1px;background:#000"></div><div style="position:absolute;left:725px;top:485px;width:1px;height:1px;background:#000"></div><div style="position:absolute;left:733px;top:485px;width:1px;height:1px;background:#000"></div><div style="position:absolute;left:725px;top:486px;width:1px;height:1px;background:#000"></div><div style="position:absolute;left:733px;top:486px;width:1px;height:1px;background:#000"></div><div style="position:absolute;left:725px;top:487px;width:1px;height:1px;background:#000"></div><div style="position:absolute;left:733px;top:487px;width:1px;height:1px;background:#000"></div><div style="position:absolute;left:725px;top:488px;width:1px;height:1px;background:#000"></div><div style="position:absolute;left:733px;top:488px;width:1px;height:1px;background:#000"></div><div style="position:absolute;left:725px;top:489px;width:9px;height:1px;background:#000"></div>
<div style="position:absolute;left:740px;top:479px;width:16px;height:14px;background:#404040;"></div>
<div style="position:absolute;left:740px;top:479px;width:15px;height:13px;background:#ECECEC;"></div>
<div style="position:absolute;left:741px;top:480px;width:14px;height:12px;background:#808080;"></div>
<div style="position:absolute;left:741px;top:480px;width:13px;height:11px;background:#DEDCD6;"></div>
<div style="position:absolute;left:742px;top:481px;width:12px;height:10px;background:#D4D0C8;"></div>
<div style="position:absolute;left:744px;top:482px;width:2px;height:1px;background:#000"></div><div style="position:absolute;left:750px;top:482px;width:2px;height:1px;background:#000"></div><div style="position:absolute;left:745px;top:483px;width:2px;height:1px;background:#000"></div><div style="position:absolute;left:749px;top:483px;width:2px;height:1px;background:#000"></div><div style="position:absolute;left:746px;top:484px;width:4px;height:1px;background:#000"></div><div style="position:absolute;left:747px;top:485px;width:2px;height:1px;background:#000"></div><div style="position:absolute;left:746px;top:486px;width:4px;height:1px;background:#000"></div><div style="position:absolute;left:745px;top:487px;width:2px;height:1px;background:#000"></div><div style="position:absolute;left:749px;top:487px;width:2px;height:1px;background:#000"></div><div style="position:absolute;left:744px;top:488px;width:2px;height:1px;background:#000"></div><div style="position:absolute;left:750px;top:488px;width:2px;height:1px;background:#000"></div>
<div style="position:absolute;left:6px;top:496px;width:752px;height:448px;background:#E6E6E6;"></div>
<div style="position:absolute;left:6px;top:496px;width:751px;height:447px;background:#808080;"></div>
<div style="position:absolute;left:7px;top:497px;width:750px;height:446px;background:#D4D0C8;"></div>
<div style="position:absolute;left:7px;top:497px;width:749px;height:445px;background:#404040;"></div>
<div style="position:absolute;left:8px;top:498px;width:748px;height:444px;background:#FFFFFF;"></div>
<div style="position:absolute;left:740px;top:498px;width:16px;height:444px;background:#E0E0E0;"></div>
<div style="position:absolute;left:740px;top:498px;width:16px;height:16px;background:#404040;"></div>
<div style="position:absolute;left:740px;top:498px;width:15px;height:15px;background:#ECECEC;"></div>
<div style="position:absolute;left:741px;top:499px;width:14px;height:14px;background:#808080;"></div>
<div style="position:absolute;left:741px;top:499px;width:13px;height:13px;background:#DEDCD6;"></div>
<div style="position:absolute;left:742px;top:500px;width:12px;height:12px;background:#D4D0C8;"></div>
<div style="position:absolute;left:747px;top:504px;width:1px;height:1px;background:#000"></div><div style="position:absolute;left:746px;top:505px;width:3px;height:1px;background:#000"></div><div style="position:absolute;left:745px;top:506px;width:5px;height:1px;background:#000"></div><div style="position:absolute;left:744px;top:507px;width:7px;height:1px;background:#000"></div>
<div style="position:absolute;left:740px;top:542px;width:16px;height:41px;background:#404040;"></div>
<div style="position:absolute;left:740px;top:542px;width:15px;height:40px;background:#ECECEC;"></div>
<div style="position:absolute;left:741px;top:543px;width:14px;height:39px;background:#808080;"></div>
<div style="position:absolute;left:741px;top:543px;width:13px;height:38px;background:#DEDCD6;"></div>
<div style="position:absolute;left:742px;top:544px;width:12px;height:37px;background:#D4D0C8;"></div>
<div style="position:absolute;left:740px;top:926px;width:16px;height:16px;background:#404040;"></div>
<div style="position:absolute;left:740px;top:926px;width:15px;height:15px;background:#ECECEC;"></div>
<div style="position:absolute;left:741px;top:927px;width:14px;height:14px;background:#808080;"></div>
<div style="position:absolute;left:741px;top:927px;width:13px;height:13px;background:#DEDCD6;"></div>
<div style="position:absolute;left:742px;top:928px;width:12px;height:12px;background:#D4D0C8;"></div>
<div style="position:absolute;left:744px;top:932px;width:7px;height:1px;background:#000"></div><div style="position:absolute;left:745px;top:933px;width:5px;height:1px;background:#000"></div><div style="position:absolute;left:746px;top:934px;width:3px;height:1px;background:#000"></div><div style="position:absolute;left:747px;top:935px;width:1px;height:1px;background:#000"></div>
<div style="position:absolute;left:8px;top:498px;width:732px;height:444px;overflow:hidden"><pre style="position:absolute;left:9px;top:4.8px;margin:0;font-family:'Liberation Mono', monospace;font-size:12px;letter-spacing:0.8px;line-height:16px;color:#000"><span style="color:#0000FF;font-weight:bold">                Partial Correlations Controlling all other Variables</span>

<span style="color:#0000FF;font-weight:bold">                                     no_bb       no_outs      no_assts      no_error</span>

no_atbat  Times at Bat in 1986     0.13332       0.09867       0.16623       0.12330
no_hits   Hits in 1986            -0.29781       0.05604       0.02386      -0.11636
no_home   Home Runs in 1986       -0.19670       0.01917      -0.14921      -0.01704
no_runs   Runs in 1986             0.48793      -0.17022      -0.11072       0.04703
no_rbi    RBIs in 1986             0.21892       0.02452      -0.02654       0.05304
no_bb     Walks in 1986            1.00000       0.16965       0.09423      -0.14062
no_outs   Put Outs in 1986         0.16965       1.00000      -0.21004       0.14177
no_assts  Assists in 1986          0.09423      -0.21004       1.00000       0.63920
no_error  Errors in 1986          -0.14062       0.14177       0.63920       1.00000


<span style="color:#0000FF;font-weight:bold">      Kaiser&#x27;s Measure of Sampling Adequacy: Overall MSA = 0.75775840</span>

<span style="color:#0000FF;font-weight:bold">  no_atbat         no_hits         no_home         no_runs          no_rbi</span>

0.85971255      0.73965308      0.65376391      0.80139205      0.76390579

<span style="color:#0000FF;font-weight:bold">Kaiser&#x27;s Measure of Sampling Adequacy: Overall MSA = 0.75775840</span>

<span style="color:#0000FF;font-weight:bold">     no_bb         no_outs        no_assts        no_error</span>

0.80137550      0.81699372      0.60922978      0.63409643</pre></div>
<div style="position:absolute;left:640px;top:64px;width:638px;height:442px;background:#404040;"></div>
<div style="position:absolute;left:640px;top:64px;width:637px;height:441px;background:#D4D0C8;"></div>
<div style="position:absolute;left:641px;top:65px;width:636px;height:440px;background:#808080;"></div>
<div style="position:absolute;left:641px;top:65px;width:635px;height:439px;background:#E6E6E6;"></div>
<div style="position:absolute;left:642px;top:66px;width:634px;height:438px;background:#D4D0C8;"></div>
<div style="position:absolute;left:644px;top:68px;width:630px;height:18px;background:#0000FF;"></div>
<div style="position:absolute;left:651px;top:70px;width:10px;height:1px;background:#303020"></div><div style="position:absolute;left:651px;top:71px;width:1px;height:1px;background:#303020"></div><div style="position:absolute;left:652px;top:71px;width:1px;height:1px;background:#FFFFFF"></div><div style="position:absolute;left:653px;top:71px;width:1px;height:1px;background:#C02828"></div><div style="position:absolute;left:654px;top:71px;width:1px;height:1px;background:#FFFFFF"></div><div style="position:absolute;left:655px;top:71px;width:1px;height:1px;background:#C02828"></div><div style="position:absolute;left:656px;top:71px;width:1px;height:1px;background:#FFFFFF"></div><div style="position:absolute;left:657px;top:71px;width:1px;height:1px;background:#C02828"></div><div style="position:absolute;left:658px;top:71px;width:1px;height:1px;background:#FFFFFF"></div><div style="position:absolute;left:659px;top:71px;width:1px;height:1px;background:#C02828"></div><div style="position:absolute;left:660px;top:71px;width:1px;height:1px;background:#303020"></div><div style="position:absolute;left:661px;top:71px;width:1px;height:1px;background:#A8A078"></div><div style="position:absolute;left:651px;top:72px;width:1px;height:1px;background:#303020"></div><div style="position:absolute;left:652px;top:72px;width:8px;height:1px;background:#C02828"></div><div style="position:absolute;left:660px;top:72px;width:1px;height:1px;background:#303020"></div><div style="position:absolute;left:661px;top:72px;width:1px;height:1px;background:#A8A078"></div><div style="position:absolute;left:651px;top:73px;width:1px;height:1px;background:#303020"></div><div style="position:absolute;left:652px;top:73px;width:2px;height:1px;background:#FFFFFF"></div><div style="position:absolute;left:654px;top:73px;width:1px;height:1px;background:#1860F0"></div><div style="position:absolute;left:655px;top:73px;width:1px;height:1px;background:#FFFFFF"></div><div style="position:absolute;left:656px;top:73px;width:1px;height:1px;background:#1860F0"></div><div style="position:absolute;left:657px;top:73px;width:1px;height:1px;background:#FFFFFF"></div><div style="position:absolute;left:658px;top:73px;width:1px;height:1px;background:#1860F0"></div><div style="position:absolute;left:659px;top:73px;width:1px;height:1px;background:#FFFFFF"></div><div style="position:absolute;left:660px;top:73px;width:1px;height:1px;background:#303020"></div><div style="position:absolute;left:661px;top:73px;width:1px;height:1px;background:#A8A078"></div><div style="position:absolute;left:651px;top:74px;width:1px;height:1px;background:#303020"></div><div style="position:absolute;left:652px;top:74px;width:8px;height:1px;background:#FFFFFF"></div><div style="position:absolute;left:660px;top:74px;width:1px;height:1px;background:#303020"></div><div style="position:absolute;left:661px;top:74px;width:1px;height:1px;background:#A8A078"></div><div style="position:absolute;left:646px;top:75px;width:11px;height:1px;background:#70A8F0"></div><div style="position:absolute;left:657px;top:75px;width:1px;height:1px;background:#FFFFFF"></div><div style="position:absolute;left:658px;top:75px;width:1px;height:1px;background:#1860F0"></div><div style="position:absolute;left:659px;top:75px;width:1px;height:1px;background:#FFFFFF"></div><div style="position:absolute;left:660px;top:75px;width:1px;height:1px;background:#303020"></div><div style="position:absolute;left:661px;top:75px;width:1px;height:1px;background:#A8A078"></div><div style="position:absolute;left:646px;top:76px;width:1px;height:1px;background:#70A8F0"></div><div style="position:absolute;left:647px;top:76px;width:9px;height:1px;background:#FFFFFF"></div><div style="position:absolute;left:656px;top:76px;width:1px;height:1px;background:#0838A8"></div><div style="position:absolute;left:657px;top:76px;width:3px;height:1px;background:#FFFFFF"></div><div style="position:absolute;left:660px;top:76px;width:1px;height:1px;background:#303020"></div><div style="position:absolute;left:661px;top:76px;width:1px;height:1px;background:#A8A078"></div><div style="position:absolute;left:646px;top:77px;width:1px;height:1px;background:#70A8F0"></div><div style="position:absolute;left:647px;top:77px;width:1px;height:1px;background:#FFFFFF"></div><div style="position:absolute;left:648px;top:77px;width:1px;height:1px;background:#707070"></div><div style="position:absolute;left:649px;top:77px;width:2px;height:1px;background:#FFFFFF"></div><div style="position:absolute;left:651px;top:77px;width:2px;height:1px;background:#FFC800"></div><div style="position:absolute;left:653px;top:77px;width:3px;height:1px;background:#FFFFFF"></div><div style="position:absolute;left:656px;top:77px;width:1px;height:1px;background:#0838A8"></div><div style="position:absolute;left:657px;top:77px;width:1px;height:1px;background:#FFFFFF"></div><div style="position:absolute;left:658px;top:77px;width:1px;height:1px;background:#1860F0"></div><div style="position:absolute;left:659px;top:77px;width:1px;height:1px;background:#FFFFFF"></div><div style="position:absolute;left:660px;top:77px;width:1px;height:1px;background:#303020"></div><div style="position:absolute;left:661px;top:77px;width:1px;height:1px;background:#A8A078"></div><div style="position:absolute;left:646px;top:78px;width:1px;height:1px;background:#70A8F0"></div><div style="position:absolute;left:647px;top:78px;width:1px;height:1px;background:#FFFFFF"></div><div style="position:absolute;left:648px;top:78px;width:1px;height:1px;background:#707070"></div><div style="position:absolute;left:649px;top:78px;width:2px;height:1px;background:#1860F0"></div><div style="position:absolute;left:651px;top:78px;width:2px;height:1px;background:#FFC800"></div><div style="position:absolute;left:653px;top:78px;width:3px;height:1px;background:#FFFFFF"></div><div style="position:absolute;left:656px;top:78px;width:1px;height:1px;background:#0838A8"></div><div style="position:absolute;left:657px;top:78px;width:3px;height:1px;background:#FFFFFF"></div><div style="position:absolute;left:660px;top:78px;width:1px;height:1px;background:#303020"></div><div style="position:absolute;left:661px;top:78px;width:1px;height:1px;background:#A8A078"></div><div style="position:absolute;left:646px;top:79px;width:1px;height:1px;background:#70A8F0"></div><div style="position:absolute;left:647px;top:79px;width:1px;height:1px;background:#FFFFFF"></div><div style="position:absolute;left:648px;top:79px;width:1px;height:1px;background:#707070"></div><div style="position:absolute;left:649px;top:79px;width:2px;height:1px;background:#1860F0"></div><div style="position:absolute;left:651px;top:79px;width:2px;height:1px;background:#FFC800"></div><div style="position:absolute;left:653px;top:79px;width:2px;height:1px;background:#E02020"></div><div style="position:absolute;left:655px;top:79px;width:1px;height:1px;background:#FFFFFF"></div><div style="position:absolute;left:656px;top:79px;width:1px;height:1px;background:#0838A8"></div><div style="position:absolute;left:657px;top:79px;width:3px;height:1px;background:#FFFFFF"></div><div style="position:absolute;left:660px;top:79px;width:1px;height:1px;background:#303020"></div><div style="position:absolute;left:661px;top:79px;width:1px;height:1px;background:#A8A078"></div><div style="position:absolute;left:646px;top:80px;width:1px;height:1px;background:#70A8F0"></div><div style="position:absolute;left:647px;top:80px;width:1px;height:1px;background:#FFFFFF"></div><div style="position:absolute;left:648px;top:80px;width:1px;height:1px;background:#707070"></div><div style="position:absolute;left:649px;top:80px;width:2px;height:1px;background:#1860F0"></div><div style="position:absolute;left:651px;top:80px;width:2px;height:1px;background:#FFC800"></div><div style="position:absolute;left:653px;top:80px;width:2px;height:1px;background:#E02020"></div><div style="position:absolute;left:655px;top:80px;width:1px;height:1px;background:#FFFFFF"></div><div style="position:absolute;left:656px;top:80px;width:1px;height:1px;background:#0838A8"></div><div style="position:absolute;left:657px;top:80px;width:4px;height:1px;background:#303020"></div><div style="position:absolute;left:661px;top:80px;width:1px;height:1px;background:#A8A078"></div><div style="position:absolute;left:646px;top:81px;width:1px;height:1px;background:#70A8F0"></div><div style="position:absolute;left:647px;top:81px;width:1px;height:1px;background:#FFFFFF"></div><div style="position:absolute;left:648px;top:81px;width:1px;height:1px;background:#707070"></div><div style="position:absolute;left:649px;top:81px;width:2px;height:1px;background:#1860F0"></div><div style="position:absolute;left:651px;top:81px;width:2px;height:1px;background:#FFC800"></div><div style="position:absolute;left:653px;top:81px;width:2px;height:1px;background:#E02020"></div><div style="position:absolute;left:655px;top:81px;width:1px;height:1px;background:#FFFFFF"></div><div style="position:absolute;left:656px;top:81px;width:1px;height:1px;background:#0838A8"></div><div style="position:absolute;left:657px;top:81px;width:4px;height:1px;background:#A8A078"></div><div style="position:absolute;left:646px;top:82px;width:1px;height:1px;background:#70A8F0"></div><div style="position:absolute;left:647px;top:82px;width:9px;height:1px;background:#FFFFFF"></div><div style="position:absolute;left:656px;top:82px;width:1px;height:1px;background:#0838A8"></div><div style="position:absolute;left:657px;top:82px;width:1px;height:1px;background:#A8A078"></div><div style="position:absolute;left:646px;top:83px;width:11px;height:1px;background:#0838A8"></div><div style="position:absolute;left:657px;top:83px;width:1px;height:1px;background:#A8A078"></div><div style="position:absolute;left:647px;top:84px;width:11px;height:1px;background:#A8A078"></div>
<svg style="position:absolute;left:0;top:0;overflow:visible" width="1" height="1"><text x="663" y="81" font-family="'Liberation Sans', sans-serif" font-size="11" font-weight="bold" fill="#FFFFFF" text-anchor="start" style="white-space:pre;letter-spacing:0.46px">Scatter Plot of _Pattern_ (baseball):1</text></svg>
<div style="position:absolute;left:1222px;top:70px;width:16px;height:14px;background:#404040;"></div>
<div style="position:absolute;left:1222px;top:70px;width:15px;height:13px;background:#ECECEC;"></div>
<div style="position:absolute;left:1223px;top:71px;width:14px;height:12px;background:#808080;"></div>
<div style="position:absolute;left:1223px;top:71px;width:13px;height:11px;background:#DEDCD6;"></div>
<div style="position:absolute;left:1224px;top:72px;width:12px;height:10px;background:#D4D0C8;"></div>
<div style="position:absolute;left:1226px;top:79px;width:6px;height:1px;background:#000"></div><div style="position:absolute;left:1226px;top:80px;width:6px;height:1px;background:#000"></div>
<div style="position:absolute;left:1238px;top:70px;width:16px;height:14px;background:#404040;"></div>
<div style="position:absolute;left:1238px;top:70px;width:15px;height:13px;background:#ECECEC;"></div>
<div style="position:absolute;left:1239px;top:71px;width:14px;height:12px;background:#808080;"></div>
<div style="position:absolute;left:1239px;top:71px;width:13px;height:11px;background:#DEDCD6;"></div>
<div style="position:absolute;left:1240px;top:72px;width:12px;height:10px;background:#D4D0C8;"></div>
<div style="position:absolute;left:1241px;top:72px;width:9px;height:1px;background:#000"></div><div style="position:absolute;left:1241px;top:73px;width:9px;height:1px;background:#000"></div><div style="position:absolute;left:1241px;top:74px;width:1px;height:1px;background:#000"></div><div style="position:absolute;left:1249px;top:74px;width:1px;height:1px;background:#000"></div><div style="position:absolute;left:1241px;top:75px;width:1px;height:1px;background:#000"></div><div style="position:absolute;left:1249px;top:75px;width:1px;height:1px;background:#000"></div><div style="position:absolute;left:1241px;top:76px;width:1px;height:1px;background:#000"></div><div style="position:absolute;left:1249px;top:76px;width:1px;height:1px;background:#000"></div><div style="position:absolute;left:1241px;top:77px;width:1px;height:1px;background:#000"></div><div style="position:absolute;left:1249px;top:77px;width:1px;height:1px;background:#000"></div><div style="position:absolute;left:1241px;top:78px;width:1px;height:1px;background:#000"></div><div style="position:absolute;left:1249px;top:78px;width:1px;height:1px;background:#000"></div><div style="position:absolute;left:1241px;top:79px;width:1px;height:1px;background:#000"></div><div style="position:absolute;left:1249px;top:79px;width:1px;height:1px;background:#000"></div><div style="position:absolute;left:1241px;top:80px;width:9px;height:1px;background:#000"></div>
<div style="position:absolute;left:1256px;top:70px;width:16px;height:14px;background:#404040;"></div>
<div style="position:absolute;left:1256px;top:70px;width:15px;height:13px;background:#ECECEC;"></div>
<div style="position:absolute;left:1257px;top:71px;width:14px;height:12px;background:#808080;"></div>
<div style="position:absolute;left:1257px;top:71px;width:13px;height:11px;background:#DEDCD6;"></div>
<div style="position:absolute;left:1258px;top:72px;width:12px;height:10px;background:#D4D0C8;"></div>
<div style="position:absolute;left:1260px;top:73px;width:2px;height:1px;background:#000"></div><div style="position:absolute;left:1266px;top:73px;width:2px;height:1px;background:#000"></div><div style="position:absolute;left:1261px;top:74px;width:2px;height:1px;background:#000"></div><div style="position:absolute;left:1265px;top:74px;width:2px;height:1px;background:#000"></div><div style="position:absolute;left:1262px;top:75px;width:4px;height:1px;background:#000"></div><div style="position:absolute;left:1263px;top:76px;width:2px;height:1px;background:#000"></div><div style="position:absolute;left:1262px;top:77px;width:4px;height:1px;background:#000"></div><div style="position:absolute;left:1261px;top:78px;width:2px;height:1px;background:#000"></div><div style="position:absolute;left:1265px;top:78px;width:2px;height:1px;background:#000"></div><div style="position:absolute;left:1260px;top:79px;width:2px;height:1px;background:#000"></div><div style="position:absolute;left:1266px;top:79px;width:2px;height:1px;background:#000"></div>
<div style="position:absolute;left:644px;top:87px;width:630px;height:415px;background:#E6E6E6;"></div>
<div style="position:absolute;left:644px;top:87px;width:629px;height:414px;background:#808080;"></div>
<div style="position:absolute;left:645px;top:88px;width:628px;height:413px;background:#D4D0C8;"></div>
<div style="position:absolute;left:645px;top:88px;width:627px;height:412px;background:#404040;"></div>
<div style="position:absolute;left:646px;top:89px;width:626px;height:411px;background:#E8E8E8;"></div>
<svg style="position:absolute;left:0;top:0" width="1280" height="1000" shape-rendering="crispEdges" font-family="Liberation Sans, sans-serif"><text x="992.5" y="121" font-size="15" font-weight="bold" text-anchor="middle" >Initial Factor Pattern</text><rect x="849" y="130" width="288" height="288" fill="#fff"/><rect x="848" y="129" width="290" height="1" fill="#000"/><rect x="848" y="418" width="290" height="1" fill="#000"/><rect x="848" y="129" width="1" height="290" fill="#000"/><rect x="1137" y="129" width="1" height="290" fill="#000"/><rect x="842" y="144" width="6" height="1" fill="#000"/><text x="840" y="148" font-size="12" font-weight="normal" text-anchor="end" >1</text><rect x="842" y="170" width="6" height="1" fill="#000"/><text x="840" y="174" font-size="12" font-weight="normal" text-anchor="end" >0.8</text><rect x="842" y="196" width="6" height="1" fill="#000"/><text x="840" y="200" font-size="12" font-weight="normal" text-anchor="end" >0.6</text><rect x="842" y="222" width="6" height="1" fill="#000"/><text x="840" y="226" font-size="12" font-weight="normal" text-anchor="end" >0.4</text><rect x="842" y="248" width="6" height="1" fill="#000"/><text x="840" y="252" font-size="12" font-weight="normal" text-anchor="end" >0.2</text><rect x="842" y="274" width="6" height="1" fill="#000"/><text x="840" y="278" font-size="12" font-weight="normal" text-anchor="end" >0</text><rect x="842" y="299" width="6" height="1" fill="#000"/><text x="840" y="303" font-size="12" font-weight="normal" text-anchor="end" >-0.2</text><rect x="842" y="325" width="6" height="1" fill="#000"/><text x="840" y="329" font-size="12" font-weight="normal" text-anchor="end" >-0.4</text><rect x="842" y="351" width="6" height="1" fill="#000"/><text x="840" y="355" font-size="12" font-weight="normal" text-anchor="end" >-0.6</text><rect x="842" y="377" width="6" height="1" fill="#000"/><text x="840" y="381" font-size="12" font-weight="normal" text-anchor="end" >-0.8</text><rect x="842" y="403" width="6" height="1" fill="#000"/><text x="840" y="407" font-size="12" font-weight="normal" text-anchor="end" >-1</text><rect x="863" y="419" width="1" height="6" fill="#000"/><text x="862.5" y="436" font-size="12" font-weight="normal" text-anchor="middle" >-1</text><rect x="889" y="419" width="1" height="6" fill="#000"/><text x="888.5" y="436" font-size="12" font-weight="normal" text-anchor="middle" >-0.8</text><rect x="915" y="419" width="1" height="6" fill="#000"/><text x="914.5" y="436" font-size="12" font-weight="normal" text-anchor="middle" >-0.6</text><rect x="941" y="419" width="1" height="6" fill="#000"/><text x="940.5" y="436" font-size="12" font-weight="normal" text-anchor="middle" >-0.4</text><rect x="967" y="419" width="1" height="6" fill="#000"/><text x="966.5" y="436" font-size="12" font-weight="normal" text-anchor="middle" >-0.2</text><rect x="993" y="419" width="1" height="6" fill="#000"/><text x="992.5" y="436" font-size="12" font-weight="normal" text-anchor="middle" >0</text><rect x="1018" y="419" width="1" height="6" fill="#000"/><text x="1017.5" y="436" font-size="12" font-weight="normal" text-anchor="middle" >0.2</text><rect x="1044" y="419" width="1" height="6" fill="#000"/><text x="1043.5" y="436" font-size="12" font-weight="normal" text-anchor="middle" >0.4</text><rect x="1070" y="419" width="1" height="6" fill="#000"/><text x="1069.5" y="436" font-size="12" font-weight="normal" text-anchor="middle" >0.6</text><rect x="1096" y="419" width="1" height="6" fill="#000"/><text x="1095.5" y="436" font-size="12" font-weight="normal" text-anchor="middle" >0.8</text><rect x="1122" y="419" width="1" height="6" fill="#000"/><text x="1121.5" y="436" font-size="12" font-weight="normal" text-anchor="middle" >1</text><text x="992.5" y="458" font-size="12.5" font-weight="bold" text-anchor="middle" >Factor1</text><text x="0" y="0" font-size="12.5" font-weight="bold" text-anchor="middle" transform="translate(804,274) rotate(-90)">Factor2</text><rect x="850" y="274" width="6" height="1" fill="#0000FF"/><rect x="859" y="274" width="6" height="1" fill="#0000FF"/><rect x="868" y="274" width="6" height="1" fill="#0000FF"/><rect x="877" y="274" width="6" height="1" fill="#0000FF"/><rect x="886" y="274" width="6" height="1" fill="#0000FF"/><rect x="895" y="274" width="6" height="1" fill="#0000FF"/><rect x="904" y="274" width="6" height="1" fill="#0000FF"/><rect x="913" y="274" width="6" height="1" fill="#0000FF"/><rect x="922" y="274" width="6" height="1" fill="#0000FF"/><rect x="931" y="274" width="6" height="1" fill="#0000FF"/><rect x="940" y="274" width="6" height="1" fill="#0000FF"/><rect x="949" y="274" width="6" height="1" fill="#0000FF"/><rect x="958" y="274" width="6" height="1" fill="#0000FF"/><rect x="967" y="274" width="6" height="1" fill="#0000FF"/><rect x="976" y="274" width="6" height="1" fill="#0000FF"/><rect x="985" y="274" width="6" height="1" fill="#0000FF"/><rect x="994" y="274" width="6" height="1" fill="#0000FF"/><rect x="1003" y="274" width="6" height="1" fill="#0000FF"/><rect x="1012" y="274" width="6" height="1" fill="#0000FF"/><rect x="1021" y="274" width="6" height="1" fill="#0000FF"/><rect x="1030" y="274" width="6" height="1" fill="#0000FF"/><rect x="1039" y="274" width="6" height="1" fill="#0000FF"/><rect x="1048" y="274" width="6" height="1" fill="#0000FF"/><rect x="1057" y="274" width="6" height="1" fill="#0000FF"/><rect x="1066" y="274" width="6" height="1" fill="#0000FF"/><rect x="1075" y="274" width="6" height="1" fill="#0000FF"/><rect x="1084" y="274" width="6" height="1" fill="#0000FF"/><rect x="1093" y="274" width="6" height="1" fill="#0000FF"/><rect x="1102" y="274" width="6" height="1" fill="#0000FF"/><rect x="1111" y="274" width="6" height="1" fill="#0000FF"/><rect x="1120" y="274" width="6" height="1" fill="#0000FF"/><rect x="1129" y="274" width="6" height="1" fill="#0000FF"/><rect x="993" y="131" width="1" height="6" fill="#0000FF"/><rect x="993" y="140" width="1" height="6" fill="#0000FF"/><rect x="993" y="149" width="1" height="6" fill="#0000FF"/><rect x="993" y="158" width="1" height="6" fill="#0000FF"/><rect x="993" y="167" width="1" height="6" fill="#0000FF"/><rect x="993" y="176" width="1" height="6" fill="#0000FF"/><rect x="993" y="185" width="1" height="6" fill="#0000FF"/><rect x="993" y="194" width="1" height="6" fill="#0000FF"/><rect x="993" y="203" width="1" height="6" fill="#0000FF"/><rect x="993" y="212" width="1" height="6" fill="#0000FF"/><rect x="993" y="221" width="1" height="6" fill="#0000FF"/><rect x="993" y="230" width="1" height="6" fill="#0000FF"/><rect x="993" y="239" width="1" height="6" fill="#0000FF"/><rect x="993" y="248" width="1" height="6" fill="#0000FF"/><rect x="993" y="257" width="1" height="6" fill="#0000FF"/><rect x="993" y="266" width="1" height="6" fill="#0000FF"/><rect x="993" y="275" width="1" height="6" fill="#0000FF"/><rect x="993" y="284" width="1" height="6" fill="#0000FF"/><rect x="993" y="293" width="1" height="6" fill="#0000FF"/><rect x="993" y="302" width="1" height="6" fill="#0000FF"/><rect x="993" y="311" width="1" height="6" fill="#0000FF"/><rect x="993" y="320" width="1" height="6" fill="#0000FF"/><rect x="993" y="329" width="1" height="6" fill="#0000FF"/><rect x="993" y="338" width="1" height="6" fill="#0000FF"/><rect x="993" y="347" width="1" height="6" fill="#0000FF"/><rect x="993" y="356" width="1" height="6" fill="#0000FF"/><rect x="993" y="365" width="1" height="6" fill="#0000FF"/><rect x="993" y="374" width="1" height="6" fill="#0000FF"/><rect x="993" y="383" width="1" height="6" fill="#0000FF"/><rect x="993" y="392" width="1" height="6" fill="#0000FF"/><rect x="993" y="401" width="1" height="6" fill="#0000FF"/><rect x="993" y="410" width="1" height="6" fill="#0000FF"/><rect x="1038" y="284" width="2" height="2" fill="#000"/><rect x="1081" y="284" width="2" height="2" fill="#000"/><rect x="1112" y="277" width="2" height="2" fill="#000"/><rect x="1108" y="303" width="2" height="2" fill="#000"/><rect x="1083" y="329" width="4" height="4" fill="#000"/><rect x="1112" y="258" width="4" height="4" fill="#000"/><rect x="1115" y="255" width="2" height="2" fill="#000"/><rect x="1027" y="173" width="4" height="4" fill="#000"/><rect x="1032" y="184" width="4" height="4" fill="#000"/><text x="1032" y="179" font-size="12.5" font-weight="normal" text-anchor="start" >Assists in 1986</text><text x="1038.5" y="190" font-size="12.5" font-weight="normal" text-anchor="start" >Errors in 1986</text><text x="1043.5" y="264" font-size="12.5" font-weight="normal" text-anchor="start" >Hits in 1986</text><text x="1011" y="335" font-size="12.5" font-weight="normal" text-anchor="start" >Home Runs in 1986</text><text x="650" y="493" font-size="15" font-weight="bold" text-anchor="start" letter-spacing="-0.18">Method: Principal Factors</text></svg>
<div style="position:absolute;left:0px;top:950px;width:1280px;height:26px;background:#D4D0C8;"></div>
<div style="position:absolute;left:2px;top:952px;width:149px;height:22px;background:#E6E6E6;"></div>
<div style="position:absolute;left:2px;top:952px;width:148px;height:21px;background:#404040;"></div>
<div style="position:absolute;left:3px;top:953px;width:147px;height:20px;background:#E0E0E0;"></div>
<div style="position:absolute;left:3px;top:953px;width:146px;height:19px;background:#808080;"></div>
<div style="position:absolute;left:4px;top:954px;width:146px;height:19px;background-color:#D4D0C8;background-image:linear-gradient(45deg,#E8E8E8 25%,transparent 25%,transparent 75%,#E8E8E8 75%),linear-gradient(45deg,#E8E8E8 25%,transparent 25%,transparent 75%,#E8E8E8 75%);background-size:2px 2px;background-position:0 0,1px 1px;opacity:1"></div>
<svg style="position:absolute;left:0;top:0;overflow:visible" width="1" height="1"><text x="27" y="969" font-family="'Liberation Sans', sans-serif" font-size="11" font-weight="normal" fill="#000" text-anchor="start" style="white-space:pre;letter-spacing:-0.3px">baseball</text></svg>
<div style="position:absolute;left:0px;top:976px;width:1280px;height:1px;background:#808080;"></div>
<div style="position:absolute;left:0px;top:977px;width:1280px;height:1px;background:#E6E6E6;"></div>
<div style="position:absolute;left:0px;top:978px;width:1280px;height:22px;background:#D4D0C8;"></div>
<svg style="position:absolute;left:0;top:0;overflow:visible" width="1" height="1"><text x="2" y="992" font-family="'Liberation Sans', sans-serif" font-size="11" font-weight="normal" fill="#000" text-anchor="start" style="white-space:pre;">Ready</text></svg>
<div style="position:absolute;left:1030px;top:980px;width:58px;height:16px;background:#E6E6E6;"></div>
<div style="position:absolute;left:1030px;top:980px;width:57px;height:15px;background:#808080;"></div>
<div style="position:absolute;left:1031px;top:981px;width:56px;height:14px;background:#D4D0C8;"></div>
<div style="position:absolute;left:1090px;top:980px;width:42px;height:16px;background:#E6E6E6;"></div>
<div style="position:absolute;left:1090px;top:980px;width:41px;height:15px;background:#808080;"></div>
<div style="position:absolute;left:1091px;top:981px;width:40px;height:14px;background:#D4D0C8;"></div>
<div style="position:absolute;left:1134px;top:980px;width:64px;height:16px;background:#E6E6E6;"></div>
<div style="position:absolute;left:1134px;top:980px;width:63px;height:15px;background:#808080;"></div>
<div style="position:absolute;left:1135px;top:981px;width:62px;height:14px;background:#D4D0C8;"></div>
<svg style="position:absolute;left:0;top:0;overflow:visible" width="1" height="1"><text x="1136" y="992" font-family="'Liberation Sans', sans-serif" font-size="11" font-weight="normal" fill="#000" text-anchor="start" style="white-space:pre;">0 Error(s)</text></svg>
<div style="position:absolute;left:1200px;top:980px;width:80px;height:16px;background:#E6E6E6;"></div>
<div style="position:absolute;left:1200px;top:980px;width:79px;height:15px;background:#808080;"></div>
<div style="position:absolute;left:1201px;top:981px;width:78px;height:14px;background:#D4D0C8;"></div>
<svg style="position:absolute;left:0;top:0;overflow:visible" width="1" height="1"><text x="1202" y="992" font-family="'Liberation Sans', sans-serif" font-size="11" font-weight="normal" fill="#000" text-anchor="start" style="white-space:pre;">0 Warning(s)</text></svg>
<div style="position:absolute;left:0px;top:997px;width:1280px;height:1px;background:#E6E6E6;"></div></div></body></html>
